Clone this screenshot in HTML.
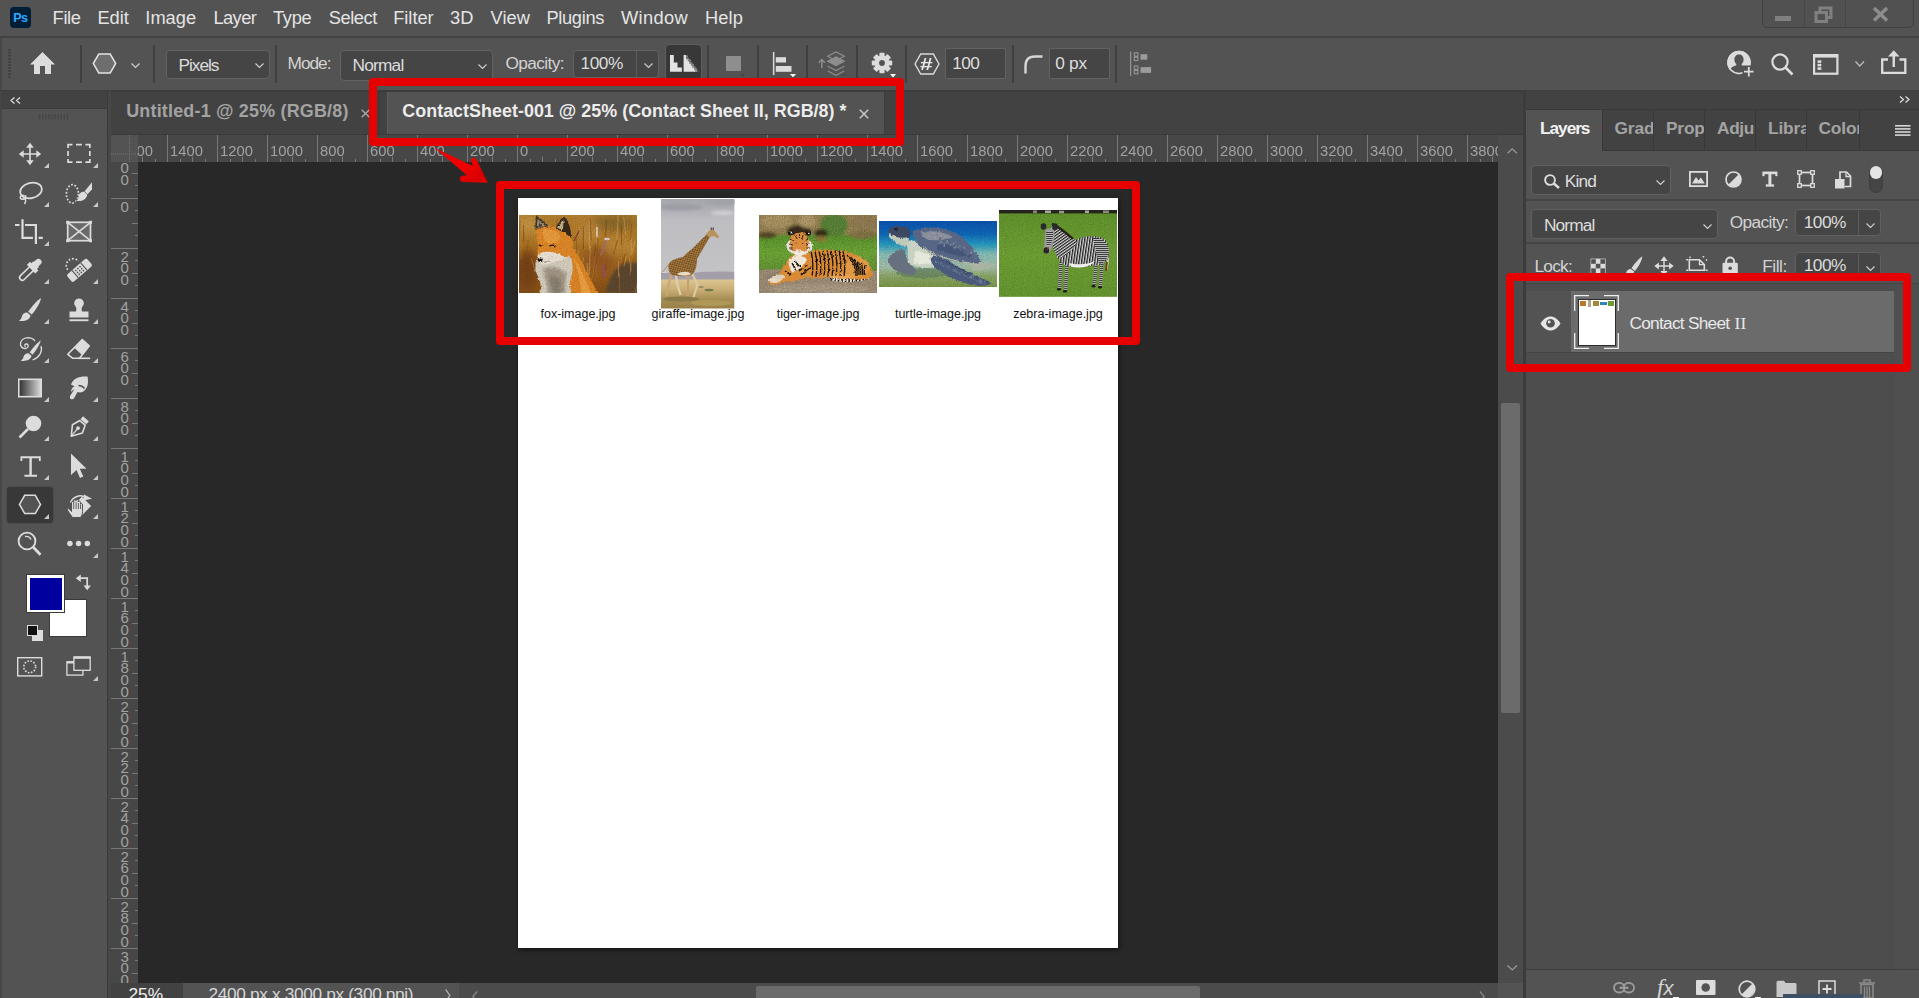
<!DOCTYPE html>
<html lang="en"><head><meta charset="utf-8"><title>ContactSheet-001 @ 25% (Contact Sheet II, RGB/8) *</title>
<style>
html,body{margin:0;padding:0;}
body{width:1919px;height:998px;overflow:hidden;background:#535353;position:relative;font-family:"Liberation Sans",sans-serif;}
.a{position:absolute;box-sizing:border-box;}
.t{position:absolute;white-space:pre;font-family:"Liberation Sans",sans-serif;}
svg{overflow:visible;}
</style></head>
<body>
<!-- p_base -->
<div class="a" style="left:0px;top:36px;width:1919px;height:2px;background:#434343;"></div>
<div class="a" style="left:0px;top:38px;width:1919px;height:52px;background:#535353;"></div>
<div class="a" style="left:0px;top:38px;width:2px;height:52px;background:#484848;"></div>
<div class="a" style="left:0px;top:89.5px;width:1919px;height:2px;background:#3e3e3e;"></div>
<div class="a" style="left:0px;top:91px;width:1919px;height:907px;background:#474747;"></div>
<div class="a" style="left:1px;top:91px;width:106.5px;height:18px;background:#424242;"></div>
<div class="a" style="left:1px;top:108px;width:106.5px;height:1px;background:#3c3c3c;"></div>
<div class="a" style="left:2px;top:109px;width:104.5px;height:889px;background:#535353;"></div>
<div class="a" style="left:107px;top:91px;width:1px;height:907px;background:#3a3a3a;"></div>
<div class="a" style="left:111px;top:91px;width:1412px;height:44px;background:#424242;"></div>
<div class="a" style="left:111px;top:91px;width:1412px;height:1px;background:#3a3a3a;"></div>
<div class="a" style="left:111px;top:134px;width:1387px;height:28px;background:#474747;"></div>
<div class="a" style="left:111px;top:162px;width:27px;height:821px;background:#474747;"></div>
<div class="a" style="left:138px;top:162px;width:1360px;height:821px;background:#282828;"></div>
<div class="a" style="left:1498px;top:134px;width:25px;height:849px;background:#4b4b4b;"></div>
<div class="a" style="left:111px;top:983px;width:1412px;height:15px;background:#4b4b4b;"></div>
<div class="a" style="left:1523px;top:91px;width:3px;height:907px;background:#3c3c3c;"></div>
<div class="a" style="left:1526px;top:91px;width:393px;height:18px;background:#424242;"></div>
<div class="a" style="left:1526px;top:109px;width:393px;height:41px;background:#424242;"></div>
<div class="a" style="left:1526px;top:150px;width:393px;height:848px;background:#535353;"></div>
<!-- p_menu -->
<div class="a" style="left:9.700px;top:7.300px;width:21px;height:20.500px;background:#001e36;border-radius:4px;"></div>
<div class="t" style="left:13.20px;top:12.00px;font-size:12.50px;line-height:12.50px;color:#31a8ff;letter-spacing:-0.645px;font-weight:bold;">Ps</div>
<div class="t" style="left:52.60px;top:9.00px;font-size:18.30px;line-height:18.30px;color:#e4e4e4;letter-spacing:-0.372px;">File</div>
<div class="t" style="left:97.40px;top:9.00px;font-size:18.30px;line-height:18.30px;color:#e4e4e4;letter-spacing:-0.058px;">Edit</div>
<div class="t" style="left:145.30px;top:9.00px;font-size:18.30px;line-height:18.30px;color:#e4e4e4;letter-spacing:0.008px;">Image</div>
<div class="t" style="left:213.50px;top:9.00px;font-size:18.30px;line-height:18.30px;color:#e4e4e4;letter-spacing:-0.615px;">Layer</div>
<div class="t" style="left:273.00px;top:9.00px;font-size:18.30px;line-height:18.30px;color:#e4e4e4;letter-spacing:-0.319px;">Type</div>
<div class="t" style="left:328.70px;top:9.00px;font-size:18.30px;line-height:18.30px;color:#e4e4e4;letter-spacing:-0.427px;">Select</div>
<div class="t" style="left:393.20px;top:9.00px;font-size:18.30px;line-height:18.30px;color:#e4e4e4;letter-spacing:-0.028px;">Filter</div>
<div class="t" style="left:450.10px;top:9.00px;font-size:18.30px;line-height:18.30px;color:#e4e4e4;letter-spacing:0.003px;">3D</div>
<div class="t" style="left:490.50px;top:9.00px;font-size:18.30px;line-height:18.30px;color:#e4e4e4;letter-spacing:0.091px;">View</div>
<div class="t" style="left:546.40px;top:9.00px;font-size:18.30px;line-height:18.30px;color:#e4e4e4;letter-spacing:-0.332px;">Plugins</div>
<div class="t" style="left:621.00px;top:9.00px;font-size:18.30px;line-height:18.30px;color:#e4e4e4;letter-spacing:0.319px;">Window</div>
<div class="t" style="left:705.10px;top:9.00px;font-size:18.30px;line-height:18.30px;color:#e4e4e4;letter-spacing:0.066px;">Help</div>
<div class="a" style="left:1762px;top:-2px;width:152px;height:30px;border:1px solid #404040;border-radius:0 0 5px 5px;background:#515151;"></div>
<div class="a" style="left:1804px;top:0px;width:1px;height:27px;background:#474747;"></div>
<div class="a" style="left:1845px;top:0px;width:1px;height:27px;background:#474747;"></div>
<div class="a" style="left:1775px;top:16px;width:15.5px;height:5px;background:#808080;"></div>
<svg class="a" style="left:1814px;top:6px;" width="20" height="18" viewBox="0 0 20 18"><path d="M6 5V2H17V11.500H13.500" fill="none" stroke="#808080" stroke-width="3"/><rect x="2" y="6.500" width="10.500" height="9" fill="none" stroke="#808080" stroke-width="3"/></svg>
<svg class="a" style="left:1872px;top:7px;" width="18" height="15" viewBox="0 0 18 15"><path d="M2 1L15 13.500M15 1L2 13.500" stroke="#8c8c8c" stroke-width="3.400" fill="none"/></svg>
<!-- p_options -->
<svg class="a" style="left:8px;top:49px;" width="4" height="30" viewBox="0 0 4 30"><rect x="0" y="0" width="3" height="1.6" fill="#404040"/><rect x="0" y="3.05" width="3" height="1.6" fill="#404040"/><rect x="0" y="6.1" width="3" height="1.6" fill="#404040"/><rect x="0" y="9.15" width="3" height="1.6" fill="#404040"/><rect x="0" y="12.2" width="3" height="1.6" fill="#404040"/><rect x="0" y="15.25" width="3" height="1.6" fill="#404040"/><rect x="0" y="18.3" width="3" height="1.6" fill="#404040"/><rect x="0" y="21.35" width="3" height="1.6" fill="#404040"/><rect x="0" y="24.4" width="3" height="1.6" fill="#404040"/><rect x="0" y="27.45" width="3" height="1.6" fill="#404040"/></svg>
<svg class="a" style="left:30px;top:52px;" width="25" height="22" viewBox="0 0 25 22"><path d="M12.5 0L25 12.6H21V22H15V14H10V22H4V12.6H0Z" fill="#dcdcdc"/></svg>
<div class="a" style="left:80px;top:45px;width:2px;height:38px;background:#3f3f3f;"></div>
<svg class="a" style="left:92px;top:53px;" width="25" height="21" viewBox="0 0 25 21"><path d="M1.3 10.5L6.8 1H18.2L23.7 10.5L18.2 20H6.8Z" fill="#6e6e6e" stroke="#e2e2e2" stroke-width="1.5"/></svg>
<svg class="a" style="left:131px;top:63px;" width="9" height="5.5" viewBox="0 0 9 5.5"><path d="M0.5 0.5L4.5 4.5L8.5 0.5" fill="none" stroke="#cfcfcf" stroke-width="1.15"/></svg>
<div class="a" style="left:153px;top:45px;width:2px;height:38px;background:#3f3f3f;"></div>
<div class="a" style="left:166px;top:50px;width:103.5px;height:28.5px;background:#454545;border:1px solid #626262;border-radius:4px;"></div>
<div class="t" style="left:178.50px;top:57.00px;font-size:17.30px;line-height:17.30px;color:#dcdcdc;letter-spacing:-1.025px;">Pixels</div>
<svg class="a" style="left:254.5px;top:63.3px;" width="9" height="5.5" viewBox="0 0 9 5.5"><path d="M0.5 0.5L4.5 4.5L8.5 0.5" fill="none" stroke="#cfcfcf" stroke-width="1.15"/></svg>
<div class="a" style="left:275px;top:45px;width:2px;height:38px;background:#3f3f3f;"></div>
<div class="t" style="left:287.50px;top:55.00px;font-size:17.30px;line-height:17.30px;color:#d2d2d2;letter-spacing:-1.016px;">Mode:</div>
<div class="a" style="left:340px;top:50px;width:153px;height:31px;background:#454545;border:1px solid #626262;border-radius:4px;"></div>
<div class="t" style="left:352.50px;top:57.00px;font-size:17.30px;line-height:17.30px;color:#dcdcdc;letter-spacing:-0.792px;">Normal</div>
<svg class="a" style="left:477.5px;top:63.8px;" width="9" height="5.5" viewBox="0 0 9 5.5"><path d="M0.5 0.5L4.5 4.5L8.5 0.5" fill="none" stroke="#cfcfcf" stroke-width="1.15"/></svg>
<div class="t" style="left:505.50px;top:55.00px;font-size:17.30px;line-height:17.30px;color:#d2d2d2;letter-spacing:-0.619px;">Opacity:</div>
<div class="a" style="left:573px;top:50px;width:85.5px;height:27.5px;background:#454545;border:1px solid #626262;border-radius:4px;"></div>
<div class="a" style="left:636px;top:51px;width:1px;height:25.5px;background:#5c5c5c;"></div>
<div class="t" style="left:580.50px;top:55.00px;font-size:17.30px;line-height:17.30px;color:#dcdcdc;letter-spacing:-0.437px;">100%</div>
<svg class="a" style="left:643.5px;top:63px;" width="9" height="5.5" viewBox="0 0 9 5.5"><path d="M0.5 0.5L4.5 4.5L8.5 0.5" fill="none" stroke="#cfcfcf" stroke-width="1.15"/></svg>
<div class="a" style="left:665.400px;top:44px;width:36.600px;height:39px;background:#383838;border-radius:4px;border:1px solid #5e5e5e;"></div>
<svg class="a" style="left:670px;top:55px;" width="27" height="17" viewBox="0 0 27 17"><path d="M0 0H3.800V7.400H7.500V12.600H11.900V16.800H0Z" fill="#e2e2e2"/><path d="M13.600 0H16.200V4.200H19.300V8.400H22.400V12.600H25.500V16.800H13.600Z" fill="#e2e2e2"/><rect x="16.2" y="0.5" width="1.600" height="1.600" fill="#8c8c8c"/><rect x="16.2" y="2.6" width="1.500" height="1.600" fill="#a8a8a8"/><rect x="17.8" y="2.6" width="1.500" height="1.600" fill="#6a6a6a"/><rect x="17.8" y="4.7" width="1.500" height="1.600" fill="#777"/><rect x="19.3" y="4.7" width="1.600" height="1.600" fill="#8c8c8c"/><rect x="19.3" y="6.8" width="1.500" height="1.600" fill="#a8a8a8"/><rect x="20.9" y="6.8" width="1.500" height="1.600" fill="#6a6a6a"/><rect x="20.9" y="8.9" width="1.500" height="1.600" fill="#777"/><rect x="22.4" y="8.9" width="1.600" height="1.600" fill="#8c8c8c"/><rect x="22.4" y="11" width="1.500" height="1.600" fill="#a8a8a8"/><rect x="24" y="11" width="1.500" height="1.600" fill="#6a6a6a"/><rect x="24" y="13.1" width="1.500" height="1.600" fill="#777"/><rect x="25.5" y="13.1" width="1.600" height="1.600" fill="#8c8c8c"/><rect x="25.5" y="15.2" width="1.500" height="1.600" fill="#a8a8a8"/><rect x="27.1" y="15.2" width="1.500" height="1.600" fill="#6a6a6a"/></svg>
<div class="a" style="left:707px;top:45px;width:2px;height:38px;background:#3f3f3f;"></div>
<div class="a" style="left:725.6px;top:55.5px;width:15px;height:15.2px;background:#8e8e8e;border-radius:1px;"></div>
<svg class="a" style="left:740.4px;top:74.3px;" width="6" height="4" viewBox="0 0 6 4"><path d="M0 0H5.400L2.700 3.200Z" fill="#474747"/></svg>
<div class="a" style="left:757px;top:45px;width:2px;height:38px;background:#3f3f3f;"></div>
<svg class="a" style="left:772px;top:52px;" width="26" height="26" viewBox="0 0 26 26"><rect x="0.900" y="0" width="1.500" height="23" fill="#dcdcdc"/><rect x="3.800" y="5.200" width="10.200" height="5.300" fill="#dcdcdc"/><rect x="3.800" y="14" width="15.700" height="5.800" fill="#dcdcdc"/><path d="M17.900 21.900H24.100L21 25.300Z" fill="#fff"/></svg>
<div class="a" style="left:806px;top:45px;width:2px;height:38px;background:#3f3f3f;"></div>
<svg class="a" style="left:817px;top:51px;" width="30" height="27" viewBox="0 0 30 27"><g fill="none" stroke="#8d8d8d" stroke-width="1.200"><path d="M19 0.900L27.300 5.200L19 9.500L10.700 5.200Z"/><path d="M10.700 15.200L19 19.500L27.300 15.200"/><path d="M10.700 20L19 24.300L27.300 20"/></g><path d="M19 5.900L27.300 10.200L19 14.500L10.700 10.200Z" fill="#8d8d8d" stroke="#8d8d8d" stroke-width="1.200"/><path d="M4.800 17V9M1.800 11.800L4.800 8.500L7.800 11.800" fill="none" stroke="#8d8d8d" stroke-width="1.500"/><path d="M24 23H29L26.500 26Z" fill="#4a4a4a"/></svg>
<div class="a" style="left:856px;top:45px;width:2px;height:38px;background:#3f3f3f;"></div>
<svg class="a" style="left:872px;top:53px;" width="20" height="20" viewBox="0 0 20 20"><g transform="translate(10 10)"><rect x="-2.6" y="-10.2" width="5.2" height="5" rx="0.8" transform="rotate(0)" fill="#dcdcdc"/><rect x="-2.6" y="-10.2" width="5.2" height="5" rx="0.8" transform="rotate(45)" fill="#dcdcdc"/><rect x="-2.6" y="-10.2" width="5.2" height="5" rx="0.8" transform="rotate(90)" fill="#dcdcdc"/><rect x="-2.6" y="-10.2" width="5.2" height="5" rx="0.8" transform="rotate(135)" fill="#dcdcdc"/><rect x="-2.6" y="-10.2" width="5.2" height="5" rx="0.8" transform="rotate(180)" fill="#dcdcdc"/><rect x="-2.6" y="-10.2" width="5.2" height="5" rx="0.8" transform="rotate(225)" fill="#dcdcdc"/><rect x="-2.6" y="-10.2" width="5.2" height="5" rx="0.8" transform="rotate(270)" fill="#dcdcdc"/><rect x="-2.6" y="-10.2" width="5.2" height="5" rx="0.8" transform="rotate(315)" fill="#dcdcdc"/><circle r="5.2" fill="none" stroke="#dcdcdc" stroke-width="4.600"/></g></svg>
<svg class="a" style="left:889.5px;top:73.5px;" width="6" height="4" viewBox="0 0 6 4"><path d="M0 0H6L3 3.4Z" fill="#fff"/></svg>
<div class="a" style="left:905px;top:45px;width:2px;height:38px;background:#3f3f3f;"></div>
<svg class="a" style="left:913.5px;top:53px;" width="26" height="22" viewBox="0 0 26 22"><path d="M1 11L6.7 1H19.3L25 11L19.3 21H6.7Z" fill="none" stroke="#dcdcdc" stroke-width="1.4"/></svg>
<div class="t" style="left:920.30px;top:56.00px;font-size:16.50px;line-height:16.50px;color:#e6e6e6;letter-spacing:0.000px;font-weight:bold;transform:scaleX(1.38);transform-origin:0 0;">#</div>
<div class="a" style="left:945px;top:48px;width:60.5px;height:30.5px;background:#454545;border:1px solid #626262;border-radius:1px;"></div>
<div class="t" style="left:952.20px;top:55.00px;font-size:17.30px;line-height:17.30px;color:#dcdcdc;letter-spacing:-0.622px;">100</div>
<div class="a" style="left:1012px;top:45px;width:2px;height:38px;background:#3f3f3f;"></div>
<svg class="a" style="left:1023px;top:54px;" width="20" height="20" viewBox="0 0 20 20"><path d="M2.5 19.5V12Q2.5 2.5 12 2.5H19.5" fill="none" stroke="#d6d6d6" stroke-width="2.4"/></svg>
<div class="a" style="left:1049px;top:48px;width:60.5px;height:30.5px;background:#454545;border:1px solid #626262;border-radius:1px;"></div>
<div class="t" style="left:1055.30px;top:55.00px;font-size:17.30px;line-height:17.30px;color:#dcdcdc;letter-spacing:-0.300px;">0 px</div>
<div class="a" style="left:1115px;top:45px;width:2px;height:38px;background:#3f3f3f;"></div>
<svg class="a" style="left:1129px;top:51px;" width="24" height="26" viewBox="0 0 24 26"><rect x="1.100" y="0.500" width="1.100" height="24.500" fill="#9c9c9c"/><g fill="none" stroke="#9c9c9c" stroke-width="1"><rect x="5.300" y="1.800" width="3.600" height="3.400"/><rect x="5.300" y="6.200" width="3.600" height="3.400"/><rect x="5.300" y="15" width="3.600" height="3.400"/><rect x="5.300" y="19.400" width="3.600" height="3.400"/><path d="M7.100 5.200V6.200M7.100 18.400V19.400"/></g><rect x="11.500" y="3.200" width="6.800" height="5.500" fill="#9c9c9c"/><rect x="11.500" y="16.100" width="10.600" height="5.800" fill="#9c9c9c"/></svg>
<svg class="a" style="left:1727px;top:50px;" width="28" height="27" viewBox="0 0 28 27"><circle cx="12" cy="12.500" r="11.700" fill="#dcdcdc"/><path d="M12 4.500c2.800 0 4.600 2.100 4.600 5 0 2-.9 3.600-1.900 4.500v1.300c2.500.8 5 1.900 6 3.700V24H3.300V19c1-1.800 3.500-2.900 6-3.700V14c-1-.9-1.900-2.500-1.900-4.500 0-2.900 1.800-5 4.600-5Z" fill="#535353"/><path d="M0 19.500C4 25.500 12 26 18 22L24 30H-2Z" fill="#535353"/><circle cx="12" cy="12.500" r="11" fill="none" stroke="#dcdcdc" stroke-width="1.600"/><rect x="15.500" y="15.500" width="13" height="12" fill="#535353"/><path d="M21.800 17V26.500M17 21.700H26.600" stroke="#dcdcdc" stroke-width="1.800" fill="none"/></svg>
<svg class="a" style="left:1771px;top:53px;" width="24" height="23" viewBox="0 0 24 23"><circle cx="9" cy="9" r="7.6" fill="none" stroke="#dcdcdc" stroke-width="2.2"/><path d="M14.5 14.5L21.5 21.5" stroke="#dcdcdc" stroke-width="2.6" fill="none"/></svg>
<svg class="a" style="left:1813px;top:54px;" width="26" height="21" viewBox="0 0 26 21"><rect x="1.1" y="1.1" width="23.3" height="18.6" fill="none" stroke="#dcdcdc" stroke-width="2.2"/><rect x="1" y="1" width="23.5" height="2.6" fill="#dcdcdc"/><rect x="4.5" y="6.3" width="3.8" height="2.6" fill="#dcdcdc"/><rect x="4.5" y="9.8" width="3.8" height="2.6" fill="#dcdcdc"/><rect x="4.5" y="13.3" width="3.8" height="2.6" fill="#dcdcdc"/></svg>
<svg class="a" style="left:1854.5px;top:61px;" width="9.5" height="6" viewBox="0 0 9.5 6"><path d="M0.5 0.5L4.75 5L9 0.5" fill="none" stroke="#bdbdbd" stroke-width="1.3"/></svg>
<svg class="a" style="left:1881px;top:49px;" width="26" height="25" viewBox="0 0 26 25"><path d="M7 10.5H1.2V23.8H24.3V10.5H18.5" fill="none" stroke="#dcdcdc" stroke-width="2.3"/><path d="M12.75 18V3" stroke="#dcdcdc" stroke-width="2.4" fill="none"/><path d="M7 7.5L12.75 1.2L18.5 7.5Z" fill="#dcdcdc"/></svg>
<!-- p_tools -->
<svg class="a" style="left:10px;top:97px;" width="12" height="8" viewBox="0 0 12 8"><path d="M4.5 0.5L1 3.5L4.5 6.5M10 0.5L6.5 3.5L10 6.5" fill="none" stroke="#e0e0e0" stroke-width="1.2"/></svg>
<svg class="a" style="left:39px;top:114px;" width="30" height="6" viewBox="0 0 30 6"><rect x="0" y="0" width="1.2" height="5.5" fill="#454545"/><rect x="3.1" y="0" width="1.2" height="5.5" fill="#454545"/><rect x="6.2" y="0" width="1.2" height="5.5" fill="#454545"/><rect x="9.3" y="0" width="1.2" height="5.5" fill="#454545"/><rect x="12.4" y="0" width="1.2" height="5.5" fill="#454545"/><rect x="15.5" y="0" width="1.2" height="5.5" fill="#454545"/><rect x="18.6" y="0" width="1.2" height="5.5" fill="#454545"/><rect x="21.7" y="0" width="1.2" height="5.5" fill="#454545"/><rect x="24.8" y="0" width="1.2" height="5.5" fill="#454545"/><rect x="27.9" y="0" width="1.2" height="5.5" fill="#454545"/></svg>
<svg class="a" style="left:16.5px;top:141px;" width="26" height="26" viewBox="0 0 26 26"><path d="M13 1.800L16.800 6.700H13.800V12.200H19.300V9.200L24.200 13L19.300 16.800V13.800H13.800V19.300H16.800L13 24.200L9.200 19.300H12.200V13.800H6.700V16.800L1.800 13L6.700 9.200V12.200H12.200V6.700H9.200Z" fill="#dcdcdc"/></svg>
<svg class="a" style="left:44px;top:163px;" width="6" height="6" viewBox="0 0 6 6"><path d="M5 0V5H0Z" fill="#c8c8c8"/></svg>
<svg class="a" style="left:66px;top:141px;" width="26" height="26" viewBox="0 0 26 26"><path d="M2.050 7V3.600H6.500M10 3.600H15.900M19.400 3.600H23.850V7M23.850 10V15M23.850 18V21.200H19.400M15.900 21.200H10M6.500 21.200H2.050V18M2.050 15V10" fill="none" stroke="#dcdcdc" stroke-width="1.700"/></svg>
<svg class="a" style="left:92.7px;top:163px;" width="6" height="6" viewBox="0 0 6 6"><path d="M5 0V5H0Z" fill="#c8c8c8"/></svg>
<svg class="a" style="left:16.5px;top:180px;" width="26" height="26" viewBox="0 0 26 26"><ellipse cx="14" cy="10.500" rx="11" ry="7.600" transform="rotate(-14 14 10.500)" fill="none" stroke="#dcdcdc" stroke-width="1.700"/><path d="M6.800 15.300c-2.800-.2-4.300 1.500-3.300 3 1.200 1.700 4.800 1 5.300-1.300.2-.9-.6-1.500-1.500-1.300M6.500 17.500c2.300 1.300 3 3.800 1 6.500" fill="none" stroke="#dcdcdc" stroke-width="1.500"/></svg>
<svg class="a" style="left:44px;top:202px;" width="6" height="6" viewBox="0 0 6 6"><path d="M5 0V5H0Z" fill="#c8c8c8"/></svg>
<svg class="a" style="left:66px;top:180px;" width="26" height="26" viewBox="0 0 26 26"><ellipse cx="6.400" cy="13.900" rx="6" ry="9.200" fill="none" stroke="#dcdcdc" stroke-width="1.700" stroke-dasharray="1.700 1.750"/><path d="M17 9.500C19 11 21 13 22.500 15.500L17 23H9Z" fill="#535353"/><path d="M26 2.300V9.200L21.600 14.200L18.600 11.300Z" fill="#dcdcdc"/><path d="M18.300 11.800C14.500 11.500 12.700 14 12.500 17 12.400 18.800 11.600 20 10.200 20.900 15 21.800 20.800 20 21.200 14.500Z" fill="#dcdcdc"/></svg>
<svg class="a" style="left:92.7px;top:202px;" width="6" height="6" viewBox="0 0 6 6"><path d="M5 0V5H0Z" fill="#c8c8c8"/></svg>
<svg class="a" style="left:15px;top:218px;" width="29" height="27" viewBox="0 0 29 27"><path d="M0 7H4.500M7.500 1.200V19.800H18M10 7H20.900V26M23.600 19.800H27.800" fill="none" stroke="#dcdcdc" stroke-width="2.200"/></svg>
<svg class="a" style="left:44px;top:240.5px;" width="6" height="6" viewBox="0 0 6 6"><path d="M5 0V5H0Z" fill="#c8c8c8"/></svg>
<svg class="a" style="left:66px;top:220px;" width="27" height="23" viewBox="0 0 27 23"><rect x="1.700" y="2.300" width="22.800" height="18.400" fill="#6a6a6a" stroke="#dcdcdc" stroke-width="1.700"/><path d="M1.700 2.300L24.500 20.700M24.500 2.300L1.700 20.700" fill="none" stroke="#dcdcdc" stroke-width="1.600"/><g fill="#dcdcdc"><rect x="0.200" y="0.800" width="3" height="3"/><rect x="23" y="0.800" width="3" height="3"/><rect x="0.200" y="19.200" width="3" height="3"/><rect x="23" y="19.200" width="3" height="3"/></g></svg>
<svg class="a" style="left:16.5px;top:257px;" width="26" height="26" viewBox="0 0 26 26"><g transform="translate(3.400 22.400) rotate(-44)"><path d="M16.500 -2.700H2.700A2.700 2.700 0 0 0 2.700 2.700H16.500" fill="none" stroke="#dcdcdc" stroke-width="1.600"/><rect x="14.800" y="-6" width="4.400" height="12" fill="#dcdcdc"/><rect x="17" y="-4" width="5" height="8" fill="#dcdcdc"/><path d="M20 -3.200H25A3.200 3.200 0 0 1 25 3.200H20Z" fill="#dcdcdc"/></g></svg>
<svg class="a" style="left:44px;top:279px;" width="6" height="6" viewBox="0 0 6 6"><path d="M5 0V5H0Z" fill="#c8c8c8"/></svg>
<svg class="a" style="left:66px;top:257px;" width="26" height="26" viewBox="0 0 26 26"><path d="M1.800 12.800A6.600 6.600 0 0 1 12.500 4.300" fill="none" stroke="#dcdcdc" stroke-width="1.700" stroke-dasharray="1.700 1.750"/><g transform="translate(13.500 13.300) rotate(-41)"><rect x="-13.200" y="-4.900" width="26.400" height="9.800" rx="2" fill="#dcdcdc"/><rect x="-6.300" y="-4.800" width="1.100" height="9.600" fill="#535353"/><rect x="5.200" y="-4.800" width="1.100" height="9.600" fill="#535353"/><g fill="#535353"><circle cx="-2.800" cy="-2.400" r="0.850"/><circle cx="0" cy="-2.400" r="0.850"/><circle cx="2.800" cy="-2.400" r="0.850"/><circle cx="-2.800" cy="0.300" r="0.850"/><circle cx="0" cy="0.300" r="0.850"/><circle cx="2.800" cy="0.300" r="0.850"/><circle cx="-2.800" cy="2.800" r="0.850"/><circle cx="0" cy="2.800" r="0.850"/><circle cx="2.800" cy="2.800" r="0.850"/></g></g></svg>
<svg class="a" style="left:92.7px;top:279px;" width="6" height="6" viewBox="0 0 6 6"><path d="M5 0V5H0Z" fill="#c8c8c8"/></svg>
<svg class="a" style="left:16.5px;top:296.5px;" width="26" height="26" viewBox="0 0 26 26"><g transform="translate(-0.600 -0.600)"><path d="M24.600 1.500C20.500 4 14.500 11 11.800 15.300L15.300 18.200C19 14 24.200 6 24.600 1.500Z" fill="#dcdcdc"/><path d="M10.800 16.200C7.500 16.200 5.800 18.200 5.300 20.500 4.900 22.300 3.900 23.500 2.500 24.300 7.500 25.300 13.300 23.800 14.200 19Z" fill="#dcdcdc"/></g></svg>
<svg class="a" style="left:44px;top:318.5px;" width="6" height="6" viewBox="0 0 6 6"><path d="M5 0V5H0Z" fill="#c8c8c8"/></svg>
<svg class="a" style="left:66px;top:296.5px;" width="26" height="26" viewBox="0 0 26 26"><path d="M13 1.500A4.700 4.700 0 0 1 16.200 9.700C15.500 11 15.500 13 16 14.500H22.500V20.500H3.500V14.500H10C10.500 13 10.500 11 9.800 9.700A4.700 4.700 0 0 1 13 1.500Z" fill="#dcdcdc"/><rect x="3.500" y="22.300" width="19" height="1.900" fill="#dcdcdc"/></svg>
<svg class="a" style="left:92.7px;top:318.5px;" width="6" height="6" viewBox="0 0 6 6"><path d="M5 0V5H0Z" fill="#c8c8c8"/></svg>
<svg class="a" style="left:16.5px;top:335.5px;" width="26" height="26" viewBox="0 0 26 26"><g transform="translate(1.500 2.300) scale(0.92)"><path d="M24.600 1.500C20.500 4 14.500 11 11.800 15.300L15.300 18.200C19 14 24.200 6 24.600 1.500Z" fill="#dcdcdc" stroke="#535353" stroke-width="0.800"/><path d="M10.800 16.200C7.500 16.200 5.800 18.200 5.300 20.500 4.900 22.300 3.900 23.500 2.500 24.300 7.500 25.300 13.300 23.800 14.200 19Z" fill="#dcdcdc"/></g><path d="M8.500 10.800C7.300 10 7.600 8.200 9.200 8 11 7.800 11.800 9.800 10.600 11.400 8.800 13.500 4.500 12.500 3.500 9 2.600 5 6.300 1.800 10.800 1.700 14 1.700 16.500 3 18 5" fill="none" stroke="#dcdcdc" stroke-width="1.300"/><path d="M24 10C25.800 15.500 22.500 21.500 15.500 24" fill="none" stroke="#dcdcdc" stroke-width="1.300"/></svg>
<svg class="a" style="left:44px;top:357.5px;" width="6" height="6" viewBox="0 0 6 6"><path d="M5 0V5H0Z" fill="#c8c8c8"/></svg>
<svg class="a" style="left:66px;top:335.5px;" width="26" height="26" viewBox="0 0 26 26"><path d="M16.300 3.600L23.200 9.900L13.500 22.300H6.800L1.800 18.300Z" fill="none" stroke="#dcdcdc" stroke-width="1.600" stroke-linejoin="round"/><path d="M16.300 3.600L23.200 9.900L16 19L8.500 12Z" fill="#dcdcdc"/><path d="M12.500 22.300H24.200" fill="none" stroke="#dcdcdc" stroke-width="1.600"/></svg>
<svg class="a" style="left:92.7px;top:357.5px;" width="6" height="6" viewBox="0 0 6 6"><path d="M5 0V5H0Z" fill="#c8c8c8"/></svg>
<svg class="a" style="left:16.5px;top:374.5px" width="26" height="26" viewBox="0 0 26 26"><defs><linearGradient id="gtool" x1="0" x2="1" y1="0" y2="0"><stop offset="0" stop-color="#2e2e2e"/><stop offset="1" stop-color="#dcdcdc"/></linearGradient></defs><rect x="1.800" y="4.300" width="22.400" height="17.400" fill="url(#gtool)" stroke="#dcdcdc" stroke-width="1.600"/></svg>
<svg class="a" style="left:44px;top:396.5px;" width="6" height="6" viewBox="0 0 6 6"><path d="M5 0V5H0Z" fill="#c8c8c8"/></svg>
<svg class="a" style="left:66px;top:374.5px;" width="26" height="26" viewBox="0 0 26 26"><path d="M5 9.500C7 3.500 13 1 21.500 1.500 22.500 6.500 22.500 12 18 16 15.500 18 13 17.500 11.500 17L8.500 22.500C7.500 24.300 5.800 24.800 4.700 24 3.600 23.200 3.600 21.700 4.500 20.300L8.200 14.500C7 14.800 5.800 15.800 5 17 5 15 6 12.500 8.500 11.300 7 10.500 6 10 5 9.500Z" fill="#dcdcdc"/><path d="M12.500 10.500C15 10.500 17 11.500 18.500 13.500" fill="none" stroke="#535353" stroke-width="1.300"/></svg>
<svg class="a" style="left:92.7px;top:396.5px;" width="6" height="6" viewBox="0 0 6 6"><path d="M5 0V5H0Z" fill="#c8c8c8"/></svg>
<svg class="a" style="left:16.5px;top:414px;" width="26" height="26" viewBox="0 0 26 26"><circle cx="16.500" cy="9.500" r="7.800" fill="#dcdcdc"/><path d="M11 15L2.500 23.500" fill="none" stroke="#dcdcdc" stroke-width="2.600"/></svg>
<svg class="a" style="left:44px;top:436px;" width="6" height="6" viewBox="0 0 6 6"><path d="M5 0V5H0Z" fill="#c8c8c8"/></svg>
<svg class="a" style="left:66px;top:414px;" width="26" height="26" viewBox="0 0 26 26"><g transform="rotate(40 13 13)"><path d="M9.200 2.200H16.800V6.200H9.200Z" fill="#dcdcdc"/><path d="M9.500 7.500H16.500L19.500 15.500 13 25 6.500 15.500Z" fill="none" stroke="#dcdcdc" stroke-width="1.600" stroke-linejoin="round"/><path d="M13 24V15.500" fill="none" stroke="#dcdcdc" stroke-width="1.300"/><circle cx="13" cy="14.500" r="1.900" fill="#dcdcdc"/></g></svg>
<svg class="a" style="left:92.7px;top:436px;" width="6" height="6" viewBox="0 0 6 6"><path d="M5 0V5H0Z" fill="#c8c8c8"/></svg>
<svg class="a" style="left:16.5px;top:453px;" width="26" height="26" viewBox="0 0 26 26"><path d="M3.500 3.200H23.700V8H21.900V5.300H14.800V21.800H20V23.700H7.400V21.800H12.400V5.300H5.300V8H3.500Z" fill="#dcdcdc"/></svg>
<svg class="a" style="left:44px;top:475px;" width="6" height="6" viewBox="0 0 6 6"><path d="M5 0V5H0Z" fill="#c8c8c8"/></svg>
<svg class="a" style="left:66px;top:453px;" width="26" height="26" viewBox="0 0 26 26"><path d="M5 0.500V22L10.500 17L14 25L17.300 23.500L13.800 15.800H20.500Z" fill="#dcdcdc"/></svg>
<svg class="a" style="left:92.7px;top:475px;" width="6" height="6" viewBox="0 0 6 6"><path d="M5 0V5H0Z" fill="#c8c8c8"/></svg>
<div class="a" style="left:6.300px;top:486px;width:47.500px;height:37.500px;background:#383838;border-radius:4px;border:1px solid #4c4c4c;"></div>
<svg class="a" style="left:16.5px;top:492px;" width="26" height="26" viewBox="0 0 26 26"><path d="M2.500 12.400L7.700 3.300H18.300L23.500 12.400L18.300 21.500H7.700Z" fill="#535353" stroke="#dcdcdc" stroke-width="1.500"/></svg>
<svg class="a" style="left:44px;top:514px;" width="6" height="6" viewBox="0 0 6 6"><path d="M5 0V5H0Z" fill="#c8c8c8"/></svg>
<svg class="a" style="left:66px;top:492px;" width="26" height="26" viewBox="0 0 26 26"><rect x="9.500" y="7.500" width="13" height="13" transform="rotate(45 16 14)" fill="#dcdcdc"/><path d="M4.500 10.500C7 4.500 14 2 20 5.500" fill="none" stroke="#dcdcdc" stroke-width="1.500"/><path d="M18 2.500L26 6.800 17.500 8.500Z" fill="#dcdcdc"/><path d="M6.500 25.500C4.500 22.500 2.500 20 1.500 18 1 16.800 2.500 16 3.500 17.200L5.500 19.500V10.500C5.500 9 7.500 9 7.700 10.500V8.800C7.800 7.300 9.800 7.300 10 8.800V8.500C10.100 7 12.100 7 12.300 8.500V10C12.500 8.700 14.500 8.800 14.500 10.300V12C15 11 16.800 11.300 16.500 13V19.500C16.500 22 16 23.500 14.500 25.500Z" fill="#dcdcdc" stroke="#535353" stroke-width="1"/><path d="M7.700 11V17M10.100 10V17M12.400 11V17M14.500 12.500V17" stroke="#535353" stroke-width="0.900" fill="none"/></svg>
<svg class="a" style="left:92.7px;top:514px;" width="6" height="6" viewBox="0 0 6 6"><path d="M5 0V5H0Z" fill="#c8c8c8"/></svg>
<svg class="a" style="left:16.5px;top:531px;" width="26" height="26" viewBox="0 0 26 26"><circle cx="10" cy="10" r="8.400" fill="none" stroke="#dcdcdc" stroke-width="1.900"/><path d="M8 5.500A5 5 0 0 1 14 8.500" fill="none" stroke="#dcdcdc" stroke-width="1.300"/><path d="M16.300 16.300L23.500 23.800" fill="none" stroke="#dcdcdc" stroke-width="2.800"/></svg>
<svg class="a" style="left:66px;top:531px;" width="26" height="26" viewBox="0 0 26 26"><circle cx="3.900" cy="12.600" r="2.750" fill="#dcdcdc"/><circle cx="12.600" cy="12.600" r="2.750" fill="#dcdcdc"/><circle cx="21.300" cy="12.600" r="2.750" fill="#dcdcdc"/></svg>
<svg class="a" style="left:92.7px;top:553px;" width="6" height="6" viewBox="0 0 6 6"><path d="M5 0V5H0Z" fill="#c8c8c8"/></svg>
<div class="a" style="left:49px;top:599px;width:38px;height:38.200px;background:#ffffff;border:1px solid #3a3a3a;"></div>
<div class="a" style="left:26.300px;top:574.300px;width:38.700px;height:38.700px;background:#ffffff;border:1.500px solid #3a3a3a;"></div>
<div class="a" style="left:30px;top:578px;width:32.2px;height:32.2px;background:#00009e;"></div>
<svg class="a" style="left:75px;top:573.5px;" width="18" height="18" viewBox="0 0 18 18"><path d="M5 4.200H12.200V12.500" fill="none" stroke="#dcdcdc" stroke-width="1.700"/><path d="M0.800 4.200L5.800 0.500V7.900Z" fill="#dcdcdc"/><path d="M12.200 16.300L8.500 11.500H15.900Z" fill="#dcdcdc"/></svg>
<div class="a" style="left:32px;top:630px;width:11px;height:11px;background:#dcdcdc;"></div>
<div class="a" style="left:27px;top:625.2px;width:11.2px;height:10.6px;background:#111;border:1.500px solid #dcdcdc;"></div>
<svg class="a" style="left:17px;top:656.5px;" width="27" height="21" viewBox="0 0 27 21"><rect x="0.700" y="0.700" width="24" height="18.200" fill="none" stroke="#dcdcdc" stroke-width="1.400"/><circle cx="12.700" cy="9.800" r="5.900" fill="none" stroke="#dcdcdc" stroke-width="1.600" stroke-dasharray="1.600 1.490"/></svg>
<svg class="a" style="left:66px;top:655.5px;" width="26" height="21" viewBox="0 0 26 21"><rect x="0.900" y="5.800" width="16" height="13.300" fill="#535353" stroke="#dcdcdc" stroke-width="1.300"/><rect x="0.900" y="5.500" width="16" height="2" fill="#dcdcdc"/><rect x="7.900" y="1" width="16.300" height="13.300" fill="#535353" stroke="#dcdcdc" stroke-width="1.300"/><rect x="7.900" y="0.500" width="16.300" height="2.300" fill="#dcdcdc"/></svg>
<svg class="a" style="left:93px;top:675.5px;" width="6" height="6" viewBox="0 0 6 6"><path d="M5 0V5H0Z" fill="#c8c8c8"/></svg>
<!-- p_doc -->
<div class="t" style="left:126.20px;top:103.00px;font-size:17.90px;line-height:17.90px;color:#a3a3a3;letter-spacing:0.214px;font-weight:bold;">Untitled-1 @ 25% (RGB/8)</div>
<svg class="a" style="left:360.5px;top:108.5px;" width="9" height="9" viewBox="0 0 9 9"><path d="M0.700 0.700L8.300 8.300M8.300 0.700L0.700 8.300" stroke="#a8a8a8" stroke-width="1.400" fill="none"/></svg>
<div class="a" style="left:378px;top:91px;width:1px;height:43px;background:#3a3a3a;"></div>
<div class="a" style="left:387px;top:92px;width:497.3px;height:42px;background:#535353;"></div>
<div class="a" style="left:387px;top:92px;width:1px;height:41.5px;background:#5d5d5d;"></div>
<div class="a" style="left:884.3px;top:92px;width:1px;height:42px;background:#3d3d3d;"></div>
<div class="t" style="left:402.30px;top:103.00px;font-size:17.90px;line-height:17.90px;color:#ececec;letter-spacing:0.026px;font-weight:bold;">ContactSheet-001 @ 25% (Contact Sheet II, RGB/8) *</div>
<svg class="a" style="left:859px;top:109px;" width="10" height="10" viewBox="0 0 10 10"><path d="M0.800 0.800L9.200 9.200M9.200 0.800L0.800 9.200" stroke="#c8c8c8" stroke-width="1.500" fill="none"/></svg>
<div class="a" style="left:111px;top:134px;width:1412px;height:1px;background:#3a3a3a;"></div>
<svg class="a" style="left:110px;top:134px;overflow:hidden" width="1388" height="28" viewBox="0 0 1388 28"><rect x="32" y="22.5" width="1" height="5.5" fill="#787878"/><rect x="45" y="25" width="1" height="3" fill="#787878"/><rect x="57" y="1" width="1" height="27" fill="#787878"/><rect x="70" y="25" width="1" height="3" fill="#787878"/><rect x="82" y="22.5" width="1" height="5.5" fill="#787878"/><rect x="95" y="25" width="1" height="3" fill="#787878"/><rect x="107" y="1" width="1" height="27" fill="#787878"/><rect x="120" y="25" width="1" height="3" fill="#787878"/><rect x="132" y="22.5" width="1" height="5.5" fill="#787878"/><rect x="145" y="25" width="1" height="3" fill="#787878"/><rect x="157" y="1" width="1" height="27" fill="#787878"/><rect x="170" y="25" width="1" height="3" fill="#787878"/><rect x="182" y="22.5" width="1" height="5.5" fill="#787878"/><rect x="195" y="25" width="1" height="3" fill="#787878"/><rect x="207" y="1" width="1" height="27" fill="#787878"/><rect x="220" y="25" width="1" height="3" fill="#787878"/><rect x="232" y="22.5" width="1" height="5.5" fill="#787878"/><rect x="245" y="25" width="1" height="3" fill="#787878"/><rect x="257" y="1" width="1" height="27" fill="#787878"/><rect x="270" y="25" width="1" height="3" fill="#787878"/><rect x="282" y="22.5" width="1" height="5.5" fill="#787878"/><rect x="295" y="25" width="1" height="3" fill="#787878"/><rect x="307" y="1" width="1" height="27" fill="#787878"/><rect x="320" y="25" width="1" height="3" fill="#787878"/><rect x="332" y="22.5" width="1" height="5.5" fill="#787878"/><rect x="345" y="25" width="1" height="3" fill="#787878"/><rect x="357" y="1" width="1" height="27" fill="#787878"/><rect x="370" y="25" width="1" height="3" fill="#787878"/><rect x="382" y="22.5" width="1" height="5.5" fill="#787878"/><rect x="395" y="25" width="1" height="3" fill="#787878"/><rect x="407" y="1" width="1" height="27" fill="#787878"/><rect x="420" y="25" width="1" height="3" fill="#787878"/><rect x="432" y="22.5" width="1" height="5.5" fill="#787878"/><rect x="445" y="25" width="1" height="3" fill="#787878"/><rect x="457" y="1" width="1" height="27" fill="#787878"/><rect x="470" y="25" width="1" height="3" fill="#787878"/><rect x="482" y="22.5" width="1" height="5.5" fill="#787878"/><rect x="495" y="25" width="1" height="3" fill="#787878"/><rect x="507" y="1" width="1" height="27" fill="#787878"/><rect x="520" y="25" width="1" height="3" fill="#787878"/><rect x="532" y="22.5" width="1" height="5.5" fill="#787878"/><rect x="545" y="25" width="1" height="3" fill="#787878"/><rect x="557" y="1" width="1" height="27" fill="#787878"/><rect x="570" y="25" width="1" height="3" fill="#787878"/><rect x="582" y="22.5" width="1" height="5.5" fill="#787878"/><rect x="595" y="25" width="1" height="3" fill="#787878"/><rect x="607" y="1" width="1" height="27" fill="#787878"/><rect x="620" y="25" width="1" height="3" fill="#787878"/><rect x="632" y="22.5" width="1" height="5.5" fill="#787878"/><rect x="645" y="25" width="1" height="3" fill="#787878"/><rect x="657" y="1" width="1" height="27" fill="#787878"/><rect x="670" y="25" width="1" height="3" fill="#787878"/><rect x="682" y="22.5" width="1" height="5.5" fill="#787878"/><rect x="695" y="25" width="1" height="3" fill="#787878"/><rect x="707" y="1" width="1" height="27" fill="#787878"/><rect x="720" y="25" width="1" height="3" fill="#787878"/><rect x="732" y="22.5" width="1" height="5.5" fill="#787878"/><rect x="745" y="25" width="1" height="3" fill="#787878"/><rect x="757" y="1" width="1" height="27" fill="#787878"/><rect x="770" y="25" width="1" height="3" fill="#787878"/><rect x="782" y="22.5" width="1" height="5.5" fill="#787878"/><rect x="795" y="25" width="1" height="3" fill="#787878"/><rect x="807" y="1" width="1" height="27" fill="#787878"/><rect x="820" y="25" width="1" height="3" fill="#787878"/><rect x="832" y="22.5" width="1" height="5.5" fill="#787878"/><rect x="845" y="25" width="1" height="3" fill="#787878"/><rect x="857" y="1" width="1" height="27" fill="#787878"/><rect x="870" y="25" width="1" height="3" fill="#787878"/><rect x="882" y="22.5" width="1" height="5.5" fill="#787878"/><rect x="895" y="25" width="1" height="3" fill="#787878"/><rect x="907" y="1" width="1" height="27" fill="#787878"/><rect x="920" y="25" width="1" height="3" fill="#787878"/><rect x="932" y="22.5" width="1" height="5.5" fill="#787878"/><rect x="945" y="25" width="1" height="3" fill="#787878"/><rect x="957" y="1" width="1" height="27" fill="#787878"/><rect x="970" y="25" width="1" height="3" fill="#787878"/><rect x="982" y="22.5" width="1" height="5.5" fill="#787878"/><rect x="995" y="25" width="1" height="3" fill="#787878"/><rect x="1007" y="1" width="1" height="27" fill="#787878"/><rect x="1020" y="25" width="1" height="3" fill="#787878"/><rect x="1032" y="22.5" width="1" height="5.5" fill="#787878"/><rect x="1045" y="25" width="1" height="3" fill="#787878"/><rect x="1057" y="1" width="1" height="27" fill="#787878"/><rect x="1070" y="25" width="1" height="3" fill="#787878"/><rect x="1082" y="22.5" width="1" height="5.5" fill="#787878"/><rect x="1095" y="25" width="1" height="3" fill="#787878"/><rect x="1107" y="1" width="1" height="27" fill="#787878"/><rect x="1120" y="25" width="1" height="3" fill="#787878"/><rect x="1132" y="22.5" width="1" height="5.5" fill="#787878"/><rect x="1145" y="25" width="1" height="3" fill="#787878"/><rect x="1157" y="1" width="1" height="27" fill="#787878"/><rect x="1170" y="25" width="1" height="3" fill="#787878"/><rect x="1182" y="22.5" width="1" height="5.5" fill="#787878"/><rect x="1195" y="25" width="1" height="3" fill="#787878"/><rect x="1207" y="1" width="1" height="27" fill="#787878"/><rect x="1220" y="25" width="1" height="3" fill="#787878"/><rect x="1232" y="22.5" width="1" height="5.5" fill="#787878"/><rect x="1245" y="25" width="1" height="3" fill="#787878"/><rect x="1257" y="1" width="1" height="27" fill="#787878"/><rect x="1270" y="25" width="1" height="3" fill="#787878"/><rect x="1282" y="22.5" width="1" height="5.5" fill="#787878"/><rect x="1295" y="25" width="1" height="3" fill="#787878"/><rect x="1307" y="1" width="1" height="27" fill="#787878"/><rect x="1320" y="25" width="1" height="3" fill="#787878"/><rect x="1332" y="22.5" width="1" height="5.5" fill="#787878"/><rect x="1345" y="25" width="1" height="3" fill="#787878"/><rect x="1357" y="1" width="1" height="27" fill="#787878"/><rect x="1370" y="25" width="1" height="3" fill="#787878"/><rect x="1382" y="22.5" width="1" height="5.5" fill="#787878"/></svg>
<div class="a" style="left:138px;top:134px;width:1360px;height:28px;overflow:hidden;"><div class="t" style="left:-17.70px;top:9.00px;font-size:15.30px;line-height:15.30px;color:#a2a2a2;letter-spacing:0.000px;transform:scaleX(0.965);transform-origin:0 0;">1600</div><div class="t" style="left:32.30px;top:9.00px;font-size:15.30px;line-height:15.30px;color:#a2a2a2;letter-spacing:0.000px;transform:scaleX(0.965);transform-origin:0 0;">1400</div><div class="t" style="left:82.30px;top:9.00px;font-size:15.30px;line-height:15.30px;color:#a2a2a2;letter-spacing:0.000px;transform:scaleX(0.965);transform-origin:0 0;">1200</div><div class="t" style="left:132.30px;top:9.00px;font-size:15.30px;line-height:15.30px;color:#a2a2a2;letter-spacing:0.000px;transform:scaleX(0.965);transform-origin:0 0;">1000</div><div class="t" style="left:182.30px;top:9.00px;font-size:15.30px;line-height:15.30px;color:#a2a2a2;letter-spacing:0.000px;transform:scaleX(0.965);transform-origin:0 0;">800</div><div class="t" style="left:232.30px;top:9.00px;font-size:15.30px;line-height:15.30px;color:#a2a2a2;letter-spacing:0.000px;transform:scaleX(0.965);transform-origin:0 0;">600</div><div class="t" style="left:282.30px;top:9.00px;font-size:15.30px;line-height:15.30px;color:#a2a2a2;letter-spacing:0.000px;transform:scaleX(0.965);transform-origin:0 0;">400</div><div class="t" style="left:332.30px;top:9.00px;font-size:15.30px;line-height:15.30px;color:#a2a2a2;letter-spacing:0.000px;transform:scaleX(0.965);transform-origin:0 0;">200</div><div class="t" style="left:382.30px;top:9.00px;font-size:15.30px;line-height:15.30px;color:#a2a2a2;letter-spacing:0.000px;transform:scaleX(0.965);transform-origin:0 0;">0</div><div class="t" style="left:432.30px;top:9.00px;font-size:15.30px;line-height:15.30px;color:#a2a2a2;letter-spacing:0.000px;transform:scaleX(0.965);transform-origin:0 0;">200</div><div class="t" style="left:482.30px;top:9.00px;font-size:15.30px;line-height:15.30px;color:#a2a2a2;letter-spacing:0.000px;transform:scaleX(0.965);transform-origin:0 0;">400</div><div class="t" style="left:532.30px;top:9.00px;font-size:15.30px;line-height:15.30px;color:#a2a2a2;letter-spacing:0.000px;transform:scaleX(0.965);transform-origin:0 0;">600</div><div class="t" style="left:582.30px;top:9.00px;font-size:15.30px;line-height:15.30px;color:#a2a2a2;letter-spacing:0.000px;transform:scaleX(0.965);transform-origin:0 0;">800</div><div class="t" style="left:632.30px;top:9.00px;font-size:15.30px;line-height:15.30px;color:#a2a2a2;letter-spacing:0.000px;transform:scaleX(0.965);transform-origin:0 0;">1000</div><div class="t" style="left:682.30px;top:9.00px;font-size:15.30px;line-height:15.30px;color:#a2a2a2;letter-spacing:0.000px;transform:scaleX(0.965);transform-origin:0 0;">1200</div><div class="t" style="left:732.30px;top:9.00px;font-size:15.30px;line-height:15.30px;color:#a2a2a2;letter-spacing:0.000px;transform:scaleX(0.965);transform-origin:0 0;">1400</div><div class="t" style="left:782.30px;top:9.00px;font-size:15.30px;line-height:15.30px;color:#a2a2a2;letter-spacing:0.000px;transform:scaleX(0.965);transform-origin:0 0;">1600</div><div class="t" style="left:832.30px;top:9.00px;font-size:15.30px;line-height:15.30px;color:#a2a2a2;letter-spacing:0.000px;transform:scaleX(0.965);transform-origin:0 0;">1800</div><div class="t" style="left:882.30px;top:9.00px;font-size:15.30px;line-height:15.30px;color:#a2a2a2;letter-spacing:0.000px;transform:scaleX(0.965);transform-origin:0 0;">2000</div><div class="t" style="left:932.30px;top:9.00px;font-size:15.30px;line-height:15.30px;color:#a2a2a2;letter-spacing:0.000px;transform:scaleX(0.965);transform-origin:0 0;">2200</div><div class="t" style="left:982.30px;top:9.00px;font-size:15.30px;line-height:15.30px;color:#a2a2a2;letter-spacing:0.000px;transform:scaleX(0.965);transform-origin:0 0;">2400</div><div class="t" style="left:1032.30px;top:9.00px;font-size:15.30px;line-height:15.30px;color:#a2a2a2;letter-spacing:0.000px;transform:scaleX(0.965);transform-origin:0 0;">2600</div><div class="t" style="left:1082.30px;top:9.00px;font-size:15.30px;line-height:15.30px;color:#a2a2a2;letter-spacing:0.000px;transform:scaleX(0.965);transform-origin:0 0;">2800</div><div class="t" style="left:1132.30px;top:9.00px;font-size:15.30px;line-height:15.30px;color:#a2a2a2;letter-spacing:0.000px;transform:scaleX(0.965);transform-origin:0 0;">3000</div><div class="t" style="left:1182.30px;top:9.00px;font-size:15.30px;line-height:15.30px;color:#a2a2a2;letter-spacing:0.000px;transform:scaleX(0.965);transform-origin:0 0;">3200</div><div class="t" style="left:1232.30px;top:9.00px;font-size:15.30px;line-height:15.30px;color:#a2a2a2;letter-spacing:0.000px;transform:scaleX(0.965);transform-origin:0 0;">3400</div><div class="t" style="left:1282.30px;top:9.00px;font-size:15.30px;line-height:15.30px;color:#a2a2a2;letter-spacing:0.000px;transform:scaleX(0.965);transform-origin:0 0;">3600</div><div class="t" style="left:1332.30px;top:9.00px;font-size:15.30px;line-height:15.30px;color:#a2a2a2;letter-spacing:0.000px;transform:scaleX(0.965);transform-origin:0 0;">3800</div></div>
<div class="a" style="left:111px;top:135px;width:27px;height:27px;background:#535353;"></div>
<svg class="a" style="left:110px;top:134px;" width="28" height="28" viewBox="0 0 28 28"><path d="M1 20H28" stroke="#757575" stroke-width="1" stroke-dasharray="1 1" fill="none"/><path d="M19.500 1V28" stroke="#757575" stroke-width="1" stroke-dasharray="1 1" fill="none"/></svg>
<svg class="a" style="left:110px;top:162px;overflow:hidden" width="28" height="821" viewBox="0 0 28 821"><rect x="22" y="11" width="6" height="1" fill="#787878"/><rect x="25" y="23" width="3" height="1" fill="#787878"/><rect x="1" y="36" width="27" height="1" fill="#787878"/><rect x="25" y="48" width="3" height="1" fill="#787878"/><rect x="22" y="61" width="6" height="1" fill="#787878"/><rect x="25" y="73" width="3" height="1" fill="#787878"/><rect x="1" y="86" width="27" height="1" fill="#787878"/><rect x="25" y="98" width="3" height="1" fill="#787878"/><rect x="22" y="111" width="6" height="1" fill="#787878"/><rect x="25" y="123" width="3" height="1" fill="#787878"/><rect x="1" y="136" width="27" height="1" fill="#787878"/><rect x="25" y="148" width="3" height="1" fill="#787878"/><rect x="22" y="161" width="6" height="1" fill="#787878"/><rect x="25" y="173" width="3" height="1" fill="#787878"/><rect x="1" y="186" width="27" height="1" fill="#787878"/><rect x="25" y="198" width="3" height="1" fill="#787878"/><rect x="22" y="211" width="6" height="1" fill="#787878"/><rect x="25" y="223" width="3" height="1" fill="#787878"/><rect x="1" y="236" width="27" height="1" fill="#787878"/><rect x="25" y="248" width="3" height="1" fill="#787878"/><rect x="22" y="261" width="6" height="1" fill="#787878"/><rect x="25" y="273" width="3" height="1" fill="#787878"/><rect x="1" y="286" width="27" height="1" fill="#787878"/><rect x="25" y="298" width="3" height="1" fill="#787878"/><rect x="22" y="311" width="6" height="1" fill="#787878"/><rect x="25" y="323" width="3" height="1" fill="#787878"/><rect x="1" y="336" width="27" height="1" fill="#787878"/><rect x="25" y="348" width="3" height="1" fill="#787878"/><rect x="22" y="361" width="6" height="1" fill="#787878"/><rect x="25" y="373" width="3" height="1" fill="#787878"/><rect x="1" y="386" width="27" height="1" fill="#787878"/><rect x="25" y="398" width="3" height="1" fill="#787878"/><rect x="22" y="411" width="6" height="1" fill="#787878"/><rect x="25" y="423" width="3" height="1" fill="#787878"/><rect x="1" y="436" width="27" height="1" fill="#787878"/><rect x="25" y="448" width="3" height="1" fill="#787878"/><rect x="22" y="461" width="6" height="1" fill="#787878"/><rect x="25" y="473" width="3" height="1" fill="#787878"/><rect x="1" y="486" width="27" height="1" fill="#787878"/><rect x="25" y="498" width="3" height="1" fill="#787878"/><rect x="22" y="511" width="6" height="1" fill="#787878"/><rect x="25" y="523" width="3" height="1" fill="#787878"/><rect x="1" y="536" width="27" height="1" fill="#787878"/><rect x="25" y="548" width="3" height="1" fill="#787878"/><rect x="22" y="561" width="6" height="1" fill="#787878"/><rect x="25" y="573" width="3" height="1" fill="#787878"/><rect x="1" y="586" width="27" height="1" fill="#787878"/><rect x="25" y="598" width="3" height="1" fill="#787878"/><rect x="22" y="611" width="6" height="1" fill="#787878"/><rect x="25" y="623" width="3" height="1" fill="#787878"/><rect x="1" y="636" width="27" height="1" fill="#787878"/><rect x="25" y="648" width="3" height="1" fill="#787878"/><rect x="22" y="661" width="6" height="1" fill="#787878"/><rect x="25" y="673" width="3" height="1" fill="#787878"/><rect x="1" y="686" width="27" height="1" fill="#787878"/><rect x="25" y="698" width="3" height="1" fill="#787878"/><rect x="22" y="711" width="6" height="1" fill="#787878"/><rect x="25" y="723" width="3" height="1" fill="#787878"/><rect x="1" y="736" width="27" height="1" fill="#787878"/><rect x="25" y="748" width="3" height="1" fill="#787878"/><rect x="22" y="761" width="6" height="1" fill="#787878"/><rect x="25" y="773" width="3" height="1" fill="#787878"/><rect x="1" y="786" width="27" height="1" fill="#787878"/><rect x="25" y="798" width="3" height="1" fill="#787878"/><rect x="22" y="811" width="6" height="1" fill="#787878"/></svg>
<div class="a" style="left:110px;top:162px;width:28px;height:821px;overflow:hidden;"><div class="t" style="left:10.60px;top:-13.00px;font-size:15.00px;line-height:15.00px;color:#a2a2a2;letter-spacing:0.000px;transform:scaleX(1);transform-origin:0 0;">2</div><div class="t" style="left:10.60px;top:-2.00px;font-size:15.00px;line-height:15.00px;color:#a2a2a2;letter-spacing:0.000px;transform:scaleX(1);transform-origin:0 0;">0</div><div class="t" style="left:10.60px;top:10.00px;font-size:15.00px;line-height:15.00px;color:#a2a2a2;letter-spacing:0.000px;transform:scaleX(1);transform-origin:0 0;">0</div><div class="t" style="left:10.60px;top:37.00px;font-size:15.00px;line-height:15.00px;color:#a2a2a2;letter-spacing:0.000px;transform:scaleX(1);transform-origin:0 0;">0</div><div class="t" style="left:10.60px;top:87.00px;font-size:15.00px;line-height:15.00px;color:#a2a2a2;letter-spacing:0.000px;transform:scaleX(1);transform-origin:0 0;">2</div><div class="t" style="left:10.60px;top:98.00px;font-size:15.00px;line-height:15.00px;color:#a2a2a2;letter-spacing:0.000px;transform:scaleX(1);transform-origin:0 0;">0</div><div class="t" style="left:10.60px;top:110.00px;font-size:15.00px;line-height:15.00px;color:#a2a2a2;letter-spacing:0.000px;transform:scaleX(1);transform-origin:0 0;">0</div><div class="t" style="left:10.60px;top:137.00px;font-size:15.00px;line-height:15.00px;color:#a2a2a2;letter-spacing:0.000px;transform:scaleX(1);transform-origin:0 0;">4</div><div class="t" style="left:10.60px;top:148.00px;font-size:15.00px;line-height:15.00px;color:#a2a2a2;letter-spacing:0.000px;transform:scaleX(1);transform-origin:0 0;">0</div><div class="t" style="left:10.60px;top:160.00px;font-size:15.00px;line-height:15.00px;color:#a2a2a2;letter-spacing:0.000px;transform:scaleX(1);transform-origin:0 0;">0</div><div class="t" style="left:10.60px;top:187.00px;font-size:15.00px;line-height:15.00px;color:#a2a2a2;letter-spacing:0.000px;transform:scaleX(1);transform-origin:0 0;">6</div><div class="t" style="left:10.60px;top:198.00px;font-size:15.00px;line-height:15.00px;color:#a2a2a2;letter-spacing:0.000px;transform:scaleX(1);transform-origin:0 0;">0</div><div class="t" style="left:10.60px;top:210.00px;font-size:15.00px;line-height:15.00px;color:#a2a2a2;letter-spacing:0.000px;transform:scaleX(1);transform-origin:0 0;">0</div><div class="t" style="left:10.60px;top:237.00px;font-size:15.00px;line-height:15.00px;color:#a2a2a2;letter-spacing:0.000px;transform:scaleX(1);transform-origin:0 0;">8</div><div class="t" style="left:10.60px;top:248.00px;font-size:15.00px;line-height:15.00px;color:#a2a2a2;letter-spacing:0.000px;transform:scaleX(1);transform-origin:0 0;">0</div><div class="t" style="left:10.60px;top:260.00px;font-size:15.00px;line-height:15.00px;color:#a2a2a2;letter-spacing:0.000px;transform:scaleX(1);transform-origin:0 0;">0</div><div class="t" style="left:10.60px;top:287.00px;font-size:15.00px;line-height:15.00px;color:#a2a2a2;letter-spacing:0.000px;transform:scaleX(1);transform-origin:0 0;">1</div><div class="t" style="left:10.60px;top:298.00px;font-size:15.00px;line-height:15.00px;color:#a2a2a2;letter-spacing:0.000px;transform:scaleX(1);transform-origin:0 0;">0</div><div class="t" style="left:10.60px;top:310.00px;font-size:15.00px;line-height:15.00px;color:#a2a2a2;letter-spacing:0.000px;transform:scaleX(1);transform-origin:0 0;">0</div><div class="t" style="left:10.60px;top:322.00px;font-size:15.00px;line-height:15.00px;color:#a2a2a2;letter-spacing:0.000px;transform:scaleX(1);transform-origin:0 0;">0</div><div class="t" style="left:10.60px;top:337.00px;font-size:15.00px;line-height:15.00px;color:#a2a2a2;letter-spacing:0.000px;transform:scaleX(1);transform-origin:0 0;">1</div><div class="t" style="left:10.60px;top:348.00px;font-size:15.00px;line-height:15.00px;color:#a2a2a2;letter-spacing:0.000px;transform:scaleX(1);transform-origin:0 0;">2</div><div class="t" style="left:10.60px;top:360.00px;font-size:15.00px;line-height:15.00px;color:#a2a2a2;letter-spacing:0.000px;transform:scaleX(1);transform-origin:0 0;">0</div><div class="t" style="left:10.60px;top:372.00px;font-size:15.00px;line-height:15.00px;color:#a2a2a2;letter-spacing:0.000px;transform:scaleX(1);transform-origin:0 0;">0</div><div class="t" style="left:10.60px;top:387.00px;font-size:15.00px;line-height:15.00px;color:#a2a2a2;letter-spacing:0.000px;transform:scaleX(1);transform-origin:0 0;">1</div><div class="t" style="left:10.60px;top:398.00px;font-size:15.00px;line-height:15.00px;color:#a2a2a2;letter-spacing:0.000px;transform:scaleX(1);transform-origin:0 0;">4</div><div class="t" style="left:10.60px;top:410.00px;font-size:15.00px;line-height:15.00px;color:#a2a2a2;letter-spacing:0.000px;transform:scaleX(1);transform-origin:0 0;">0</div><div class="t" style="left:10.60px;top:422.00px;font-size:15.00px;line-height:15.00px;color:#a2a2a2;letter-spacing:0.000px;transform:scaleX(1);transform-origin:0 0;">0</div><div class="t" style="left:10.60px;top:437.00px;font-size:15.00px;line-height:15.00px;color:#a2a2a2;letter-spacing:0.000px;transform:scaleX(1);transform-origin:0 0;">1</div><div class="t" style="left:10.60px;top:448.00px;font-size:15.00px;line-height:15.00px;color:#a2a2a2;letter-spacing:0.000px;transform:scaleX(1);transform-origin:0 0;">6</div><div class="t" style="left:10.60px;top:460.00px;font-size:15.00px;line-height:15.00px;color:#a2a2a2;letter-spacing:0.000px;transform:scaleX(1);transform-origin:0 0;">0</div><div class="t" style="left:10.60px;top:472.00px;font-size:15.00px;line-height:15.00px;color:#a2a2a2;letter-spacing:0.000px;transform:scaleX(1);transform-origin:0 0;">0</div><div class="t" style="left:10.60px;top:487.00px;font-size:15.00px;line-height:15.00px;color:#a2a2a2;letter-spacing:0.000px;transform:scaleX(1);transform-origin:0 0;">1</div><div class="t" style="left:10.60px;top:498.00px;font-size:15.00px;line-height:15.00px;color:#a2a2a2;letter-spacing:0.000px;transform:scaleX(1);transform-origin:0 0;">8</div><div class="t" style="left:10.60px;top:510.00px;font-size:15.00px;line-height:15.00px;color:#a2a2a2;letter-spacing:0.000px;transform:scaleX(1);transform-origin:0 0;">0</div><div class="t" style="left:10.60px;top:522.00px;font-size:15.00px;line-height:15.00px;color:#a2a2a2;letter-spacing:0.000px;transform:scaleX(1);transform-origin:0 0;">0</div><div class="t" style="left:10.60px;top:537.00px;font-size:15.00px;line-height:15.00px;color:#a2a2a2;letter-spacing:0.000px;transform:scaleX(1);transform-origin:0 0;">2</div><div class="t" style="left:10.60px;top:548.00px;font-size:15.00px;line-height:15.00px;color:#a2a2a2;letter-spacing:0.000px;transform:scaleX(1);transform-origin:0 0;">0</div><div class="t" style="left:10.60px;top:560.00px;font-size:15.00px;line-height:15.00px;color:#a2a2a2;letter-spacing:0.000px;transform:scaleX(1);transform-origin:0 0;">0</div><div class="t" style="left:10.60px;top:572.00px;font-size:15.00px;line-height:15.00px;color:#a2a2a2;letter-spacing:0.000px;transform:scaleX(1);transform-origin:0 0;">0</div><div class="t" style="left:10.60px;top:587.00px;font-size:15.00px;line-height:15.00px;color:#a2a2a2;letter-spacing:0.000px;transform:scaleX(1);transform-origin:0 0;">2</div><div class="t" style="left:10.60px;top:598.00px;font-size:15.00px;line-height:15.00px;color:#a2a2a2;letter-spacing:0.000px;transform:scaleX(1);transform-origin:0 0;">2</div><div class="t" style="left:10.60px;top:610.00px;font-size:15.00px;line-height:15.00px;color:#a2a2a2;letter-spacing:0.000px;transform:scaleX(1);transform-origin:0 0;">0</div><div class="t" style="left:10.60px;top:622.00px;font-size:15.00px;line-height:15.00px;color:#a2a2a2;letter-spacing:0.000px;transform:scaleX(1);transform-origin:0 0;">0</div><div class="t" style="left:10.60px;top:637.00px;font-size:15.00px;line-height:15.00px;color:#a2a2a2;letter-spacing:0.000px;transform:scaleX(1);transform-origin:0 0;">2</div><div class="t" style="left:10.60px;top:648.00px;font-size:15.00px;line-height:15.00px;color:#a2a2a2;letter-spacing:0.000px;transform:scaleX(1);transform-origin:0 0;">4</div><div class="t" style="left:10.60px;top:660.00px;font-size:15.00px;line-height:15.00px;color:#a2a2a2;letter-spacing:0.000px;transform:scaleX(1);transform-origin:0 0;">0</div><div class="t" style="left:10.60px;top:672.00px;font-size:15.00px;line-height:15.00px;color:#a2a2a2;letter-spacing:0.000px;transform:scaleX(1);transform-origin:0 0;">0</div><div class="t" style="left:10.60px;top:687.00px;font-size:15.00px;line-height:15.00px;color:#a2a2a2;letter-spacing:0.000px;transform:scaleX(1);transform-origin:0 0;">2</div><div class="t" style="left:10.60px;top:698.00px;font-size:15.00px;line-height:15.00px;color:#a2a2a2;letter-spacing:0.000px;transform:scaleX(1);transform-origin:0 0;">6</div><div class="t" style="left:10.60px;top:710.00px;font-size:15.00px;line-height:15.00px;color:#a2a2a2;letter-spacing:0.000px;transform:scaleX(1);transform-origin:0 0;">0</div><div class="t" style="left:10.60px;top:722.00px;font-size:15.00px;line-height:15.00px;color:#a2a2a2;letter-spacing:0.000px;transform:scaleX(1);transform-origin:0 0;">0</div><div class="t" style="left:10.60px;top:737.00px;font-size:15.00px;line-height:15.00px;color:#a2a2a2;letter-spacing:0.000px;transform:scaleX(1);transform-origin:0 0;">2</div><div class="t" style="left:10.60px;top:748.00px;font-size:15.00px;line-height:15.00px;color:#a2a2a2;letter-spacing:0.000px;transform:scaleX(1);transform-origin:0 0;">8</div><div class="t" style="left:10.60px;top:760.00px;font-size:15.00px;line-height:15.00px;color:#a2a2a2;letter-spacing:0.000px;transform:scaleX(1);transform-origin:0 0;">0</div><div class="t" style="left:10.60px;top:772.00px;font-size:15.00px;line-height:15.00px;color:#a2a2a2;letter-spacing:0.000px;transform:scaleX(1);transform-origin:0 0;">0</div><div class="t" style="left:10.60px;top:787.00px;font-size:15.00px;line-height:15.00px;color:#a2a2a2;letter-spacing:0.000px;transform:scaleX(1);transform-origin:0 0;">3</div><div class="t" style="left:10.60px;top:798.00px;font-size:15.00px;line-height:15.00px;color:#a2a2a2;letter-spacing:0.000px;transform:scaleX(1);transform-origin:0 0;">0</div><div class="t" style="left:10.60px;top:810.00px;font-size:15.00px;line-height:15.00px;color:#a2a2a2;letter-spacing:0.000px;transform:scaleX(1);transform-origin:0 0;">0</div><div class="t" style="left:10.60px;top:822.00px;font-size:15.00px;line-height:15.00px;color:#a2a2a2;letter-spacing:0.000px;transform:scaleX(1);transform-origin:0 0;">0</div></div>
<div class="a" style="left:518px;top:198px;width:600px;height:750px;background:#fff;box-shadow:1px 2px 5px rgba(0,0,0,.55);"></div>
<svg class="a" style="left:519px;top:215px;overflow:hidden" width="118" height="78" viewBox="0 0 118 78" preserveAspectRatio="none"><defs><filter id="fxb1" x="-20%" y="-20%" width="140%" height="140%"><feGaussianBlur stdDeviation="0.6"/></filter><filter id="fxb2" x="-20%" y="-20%" width="140%" height="140%"><feGaussianBlur stdDeviation="1.6"/></filter><filter id="fxb3" x="-30%" y="-30%" width="160%" height="160%"><feGaussianBlur stdDeviation="4"/></filter><filter id="fxr" x="-10%" y="-10%" width="120%" height="120%"><feTurbulence type="fractalNoise" baseFrequency="0.35" numOctaves="2" seed="7" result="t"/><feDisplacementMap in="SourceGraphic" in2="t" scale="3.2" xChannelSelector="R" yChannelSelector="G"/><feGaussianBlur stdDeviation="0.45"/></filter><filter id="fxn" x="0" y="0" width="100%" height="100%"><feTurbulence type="fractalNoise" baseFrequency="0.9" numOctaves="2" seed="3"/><feColorMatrix type="matrix" values="0 0 0 0 0  0 0 0 0 0  0 0 0 0 0  0.9 0.9 0.9 0 -0.95"/></filter></defs><defs><linearGradient id="fxbg" x1="0" y1="0" x2="0" y2="1"><stop offset="0" stop-color="#b98432"/><stop offset="0.35" stop-color="#b57a26"/><stop offset="0.7" stop-color="#a2641d"/><stop offset="1" stop-color="#8a5218"/></linearGradient></defs><rect width="118" height="78" fill="url(#fxbg)"/><g filter="url(#fxb3)"><ellipse cx="95" cy="8" rx="22" ry="8" fill="#8f6a2a"/><ellipse cx="10" cy="10" rx="14" ry="8" fill="#c99745"/><ellipse cx="8" cy="55" rx="12" ry="20" fill="#7c4518"/><ellipse cx="80" cy="45" rx="16" ry="14" fill="#9a5c20"/><ellipse cx="100" cy="30" rx="16" ry="10" fill="#c08a38"/><ellipse cx="70" cy="18" rx="12" ry="10" fill="#c38c3a"/></g><path d="M86 78C90 62 98 48 110 47 114 47 118 48 119 49V78Z" fill="#5e4a30" filter="url(#fxb2)"/><g stroke-width="0.7" fill="none" filter="url(#fxb1)" opacity="0.75"><path d="M73.5 63.0L77.0 37.1" stroke="#b87a2c"/><path d="M76.9 50.7L79.1 23.9" stroke="#8a5218"/><path d="M76.6 72.3L76.3 60.0" stroke="#8a5218"/><path d="M44.9 25.9L46.8 10.9" stroke="#e0b868"/><path d="M33.0 73.1L30.3 47.8" stroke="#d2a04a"/><path d="M16.4 55.8L12.4 43.3" stroke="#d2a04a"/><path d="M24.7 32.5L27.7 2.8" stroke="#c08430"/><path d="M37.0 31.5L38.0 4.0" stroke="#8a5218"/><path d="M111.0 60.1L114.2 30.7" stroke="#c08430"/><path d="M2.5 44.1L0.7 15.3" stroke="#c08430"/><path d="M35.6 55.0L37.0 44.9" stroke="#c08430"/><path d="M7.8 40.6L9.4 24.5" stroke="#8a5218"/><path d="M56.8 60.9L60.6 49.7" stroke="#d2a04a"/><path d="M112.0 40.7L112.4 22.7" stroke="#e0b868"/><path d="M43.2 53.6L39.6 43.4" stroke="#8a5218"/><path d="M73.6 75.4L71.6 63.0" stroke="#e0b868"/><path d="M40.6 40.6L42.8 20.1" stroke="#d2a04a"/><path d="M69.6 65.3L68.0 48.0" stroke="#e0b868"/><path d="M111.6 25.3L112.5 8.5" stroke="#8a5218"/><path d="M40.1 73.6L38.6 52.7" stroke="#c08430"/><path d="M36.1 66.3L37.9 43.8" stroke="#c08430"/><path d="M117.6 29.4L121.5 18.4" stroke="#6e3f14"/><path d="M109.0 21.8L107.7 -3.0" stroke="#c08430"/><path d="M53.8 44.5L57.1 33.3" stroke="#d2a04a"/><path d="M94.6 39.4L98.4 25.2" stroke="#6e3f14"/><path d="M112.1 56.6L108.9 30.8" stroke="#e0b868"/><path d="M44.0 23.4L41.1 5.0" stroke="#6e3f14"/><path d="M100.6 76.6L100.5 57.5" stroke="#b87a2c"/><path d="M37.5 35.9L40.7 16.5" stroke="#d2a04a"/><path d="M44.5 77.3L45.5 48.1" stroke="#e0b868"/><path d="M102.4 30.4L102.5 10.6" stroke="#6e3f14"/><path d="M102.4 41.0L104.6 15.2" stroke="#b87a2c"/><path d="M69.3 22.0L69.8 5.9" stroke="#b87a2c"/><path d="M33.1 48.2L34.7 22.8" stroke="#c08430"/><path d="M112.9 39.7L115.7 26.2" stroke="#e0b868"/><path d="M64.5 34.5L64.2 11.1" stroke="#6e3f14"/><path d="M76.4 66.3L77.6 49.3" stroke="#b87a2c"/><path d="M110.6 43.7L108.0 15.2" stroke="#b87a2c"/><path d="M53.1 41.1L50.2 24.4" stroke="#8a5218"/><path d="M23.4 41.0L21.7 13.9" stroke="#d2a04a"/><path d="M84.9 62.4L87.2 48.9" stroke="#6e3f14"/><path d="M60.9 74.3L61.4 58.3" stroke="#b87a2c"/><path d="M31.9 77.8L32.6 63.9" stroke="#6e3f14"/><path d="M76.7 32.7L77.8 9.0" stroke="#d2a04a"/><path d="M116.4 76.8L119.5 63.5" stroke="#d2a04a"/><path d="M37.4 30.5L33.7 16.7" stroke="#e0b868"/><path d="M41.4 58.4L39.1 47.0" stroke="#b87a2c"/><path d="M106.6 20.0L104.8 1.9" stroke="#e0b868"/><path d="M102.2 60.0L106.0 39.0" stroke="#6e3f14"/><path d="M72.4 25.5L71.1 4.6" stroke="#6e3f14"/><path d="M34.6 40.4L33.9 27.8" stroke="#6e3f14"/><path d="M75.8 41.4L76.6 28.6" stroke="#6e3f14"/><path d="M56.3 31.6L53.0 18.9" stroke="#b87a2c"/><path d="M0.1 26.3L1.0 4.9" stroke="#8a5218"/><path d="M38.4 70.8L37.8 49.6" stroke="#8a5218"/><path d="M58.2 47.8L57.3 23.6" stroke="#8a5218"/><path d="M70.3 35.1L70.3 5.5" stroke="#e0b868"/><path d="M2.3 74.8L5.8 58.7" stroke="#8a5218"/><path d="M56.3 27.1L55.8 4.6" stroke="#c08430"/><path d="M4.7 27.9L4.6 10.1" stroke="#6e3f14"/><path d="M32.3 74.2L30.3 48.6" stroke="#c08430"/><path d="M99.6 61.8L99.5 46.1" stroke="#e0b868"/><path d="M61.1 70.1L64.3 42.5" stroke="#d2a04a"/><path d="M89.7 37.4L88.4 16.8" stroke="#c08430"/><path d="M86.3 21.5L87.7 4.5" stroke="#6e3f14"/><path d="M15.6 20.2L17.1 -0.9" stroke="#d2a04a"/><path d="M104.8 51.6L107.0 41.4" stroke="#e0b868"/><path d="M70.2 60.0L71.4 30.9" stroke="#e0b868"/><path d="M56.1 59.6L59.3 35.2" stroke="#e0b868"/><path d="M97.9 23.8L99.5 -2.9" stroke="#e0b868"/></g><g filter="url(#fxb1)"><path d="M55 26L60 16" stroke="#8a3a3a" stroke-width="1.300"/><path d="M82 40L88 24" stroke="#a87088" stroke-width="1.500"/><path d="M86 62L84 50" stroke="#a05068" stroke-width="2"/><path d="M78 12V22" stroke="#e8e0d8" stroke-width="1.400"/><ellipse cx="88" cy="24" rx="3" ry="1.300" fill="#e0d0d0"/></g><g filter="url(#fxr)"><path d="M44 30C56 32 62 44 68 58 72 66 76 72 79 79H46Z" fill="#e48a26"/><path d="M54 42C60 50 66 62 72 79H62C62 64 58 52 54 42Z" fill="#f2a444"/><path d="M16.500 46C24 44 36 44 48 38 55 44 55 56 51 66 51 72 52 76 52 79H21C24 70 19 62 16.500 56Z" fill="#dcd4c4"/><path d="M24 54C30 50 40 52 47 58 47 66 45 74 47 79H28C30 70 25 62 24 54Z" fill="#a79b89" filter="url(#fxb2)"/><path d="M30 62C34 60 40 62 42 66 42 70 41 75 42 79H33C34 72 31 66 30 62Z" fill="#8e8474" filter="url(#fxb2)"/><path d="M17 14C21 11.500 26 10.500 30 11.500 36 11 44 14 50 20 54.500 26 55.500 33 52 39 46 44 38 45 32 48 27 50 22 49 19.500 47.500 17.500 44 18 38 19 32 18.500 24 17 18 17 14Z" fill="#e68c2a"/><path d="M24 14C30 13 38 16 42 22 40 28 34 30 28 28 24 24 23 18 24 14Z" fill="#f0a03c"/><path d="M19 40C22 36.500 30 36 37 38 42 39 45 41 46 43 40 46 34 47.500 30 49 26 50 22 49.500 19.500 47.500 18.500 45 18.500 42 19 40Z" fill="#f2eadc"/><path d="M16.500 15C16 9.500 16.300 4 17 0.600 21.500 3 26.500 8 29 11.800 25 11.500 20 12.800 16.500 15Z" fill="#4a3b28"/><path d="M18.300 13.500C17.800 9.500 18.200 6.500 18.800 4.200 21.500 6 24.500 9 26.200 11.300Z" fill="#a89a80"/><path d="M19.500 12.500C19.500 10 20 8 20.500 7 22 8.500 23.500 10 24.500 11.500Z" fill="#5a4a34"/><path d="M37 14C38 9 41 4 45 1.800 49.500 6 52.500 14 52 22.500 47.500 19 42 15.500 37 14Z" fill="#3a2c1a"/><path d="M39 13.300C40 9.500 42.500 6 44.500 4.500 44.500 8 44 12 44 15.500Z" fill="#c8b48a"/><ellipse cx="21.300" cy="44.800" rx="2.500" ry="2.300" fill="#0c0a08"/><path d="M30.500 31.200C32 30 34.500 30 36.500 31" stroke="#24160a" stroke-width="1.300" fill="none"/><path d="M19.800 29.800L22.500 31.200" stroke="#24160a" stroke-width="1.400"/><path d="M22 46.500C25 47.500 28 47 30 46" stroke="#5a4030" stroke-width="0.600" fill="none"/></g><rect width="118" height="78" filter="url(#fxn)" opacity="0.16"/></svg>
<svg class="a" style="left:661.4px;top:199.2px;overflow:hidden" width="73.3" height="109.4" viewBox="0 0 73.3 109.4" preserveAspectRatio="none"><defs><filter id="gib1" x="-20%" y="-20%" width="140%" height="140%"><feGaussianBlur stdDeviation="0.6"/></filter><filter id="gib2" x="-20%" y="-20%" width="140%" height="140%"><feGaussianBlur stdDeviation="1.6"/></filter><filter id="gib3" x="-30%" y="-30%" width="160%" height="160%"><feGaussianBlur stdDeviation="4"/></filter><filter id="gir" x="-10%" y="-10%" width="120%" height="120%"><feTurbulence type="fractalNoise" baseFrequency="0.35" numOctaves="2" seed="7" result="t"/><feDisplacementMap in="SourceGraphic" in2="t" scale="3.2" xChannelSelector="R" yChannelSelector="G"/><feGaussianBlur stdDeviation="0.45"/></filter><filter id="gin" x="0" y="0" width="100%" height="100%"><feTurbulence type="fractalNoise" baseFrequency="0.9" numOctaves="2" seed="3"/><feColorMatrix type="matrix" values="0 0 0 0 0  0 0 0 0 0  0 0 0 0 0  0.9 0.9 0.9 0 -0.95"/></filter></defs><defs><linearGradient id="gisky" x1="0" y1="0" x2="0" y2="1"><stop offset="0" stop-color="#a6a6ae"/><stop offset="0.12" stop-color="#adadb4"/><stop offset="0.3" stop-color="#bebec2"/><stop offset="1" stop-color="#c3c3c6"/></linearGradient><linearGradient id="gigr" x1="0" y1="0" x2="0" y2="1"><stop offset="0" stop-color="#dcc592"/><stop offset="0.35" stop-color="#c9ae74"/><stop offset="0.7" stop-color="#a58c52"/><stop offset="1" stop-color="#988048"/></linearGradient></defs><rect width="73.3" height="73" fill="url(#gisky)"/><g filter="url(#gib2)"><ellipse cx="20" cy="8" rx="22" ry="3.500" fill="#9d9da6"/><ellipse cx="60" cy="3" rx="16" ry="3" fill="#a0a0a8"/><ellipse cx="62" cy="14" rx="12" ry="2.500" fill="#cfcfd2"/></g><path d="M0 74C10 72.500 25 73.500 40 73 55 72.500 65 72 73.300 73V81H0Z" fill="#a29fa9"/><rect y="80.500" width="73.300" height="29" fill="url(#gigr)"/><g filter="url(#gib1)"><ellipse cx="40" cy="88" rx="3" ry="0.800" fill="#7c8058"/><ellipse cx="48" cy="91" rx="4.500" ry="1.300" fill="#6f7a50"/><ellipse cx="20" cy="100" rx="18" ry="2.500" fill="#8a7a48"/><ellipse cx="50" cy="104" rx="20" ry="3" fill="#b09858"/></g><defs><pattern id="gisp" width="3.200" height="3" patternUnits="userSpaceOnUse" patternTransform="rotate(-30)"><rect width="3.200" height="3" fill="#b08040"/><ellipse cx="1" cy="0.900" rx="0.850" ry="0.750" fill="#4e3218"/><ellipse cx="2.500" cy="2.300" rx="0.800" ry="0.700" fill="#553a1c"/></pattern></defs><g filter="url(#gib1)"><path d="M11 72L7.500 86 5.500 97" fill="none" stroke="#c9a878" stroke-width="2.200"/><path d="M14.500 74L16.500 86 19.500 96" fill="none" stroke="#e2cda8" stroke-width="2.200"/><path d="M27 74L27 88 26.500 97" fill="none" stroke="#c9a070" stroke-width="2.200"/><path d="M30.500 73L36.500 86 32.500 98" fill="none" stroke="#e0c8a0" stroke-width="2.200"/><path d="M7.500 66C9 61 16 59 22 58 26 54 28 52 31 50L46 35 49.500 37 36 60C36 68 34 74 30 76 24 78 16 77 11 76 8 74 7 70 7.500 66Z" fill="url(#gisp)"/><path d="M16 75C20 77 26 77 30 75 28 72 20 72 16 75Z" fill="#e8dcc4"/><path d="M45.500 36C46 33 48 31 51 30.500 53.500 31 55.500 34 58.300 38.300 57.500 39.500 56 39.500 54 37.500 52 37 50 37.500 48.500 38.500Z" fill="#b8925a"/><path d="M50.200 31V28.500M52.200 31V28.500" stroke="#2a1a10" stroke-width="0.900"/><path d="M46.500 32.500L44.500 31.500" stroke="#e0d0b0" stroke-width="1.300"/><path d="M8 65C5 68 3 72 0 75" fill="none" stroke="#b08850" stroke-width="0.900"/></g></svg>
<svg class="a" style="left:759px;top:215px;overflow:hidden" width="118" height="78" viewBox="0 0 118 78" preserveAspectRatio="none"><defs><filter id="tgb1" x="-20%" y="-20%" width="140%" height="140%"><feGaussianBlur stdDeviation="0.6"/></filter><filter id="tgb2" x="-20%" y="-20%" width="140%" height="140%"><feGaussianBlur stdDeviation="1.6"/></filter><filter id="tgb3" x="-30%" y="-30%" width="160%" height="160%"><feGaussianBlur stdDeviation="4"/></filter><filter id="tgr" x="-10%" y="-10%" width="120%" height="120%"><feTurbulence type="fractalNoise" baseFrequency="0.35" numOctaves="2" seed="7" result="t"/><feDisplacementMap in="SourceGraphic" in2="t" scale="3.2" xChannelSelector="R" yChannelSelector="G"/><feGaussianBlur stdDeviation="0.45"/></filter><filter id="tgn" x="0" y="0" width="100%" height="100%"><feTurbulence type="fractalNoise" baseFrequency="0.9" numOctaves="2" seed="3"/><feColorMatrix type="matrix" values="0 0 0 0 0  0 0 0 0 0  0 0 0 0 0  0.9 0.9 0.9 0 -0.95"/></filter></defs><rect width="118" height="78" fill="#6aa534"/><defs><linearGradient id="tggr" x1="0" y1="0" x2="0" y2="1"><stop offset="0" stop-color="#5e9a2e"/><stop offset="0.5" stop-color="#74b03a"/><stop offset="1" stop-color="#6a9a38"/></linearGradient></defs><rect y="18" width="118" height="40" fill="url(#tggr)"/><g filter="url(#tgb2)"><rect x="-4" y="-4" width="126" height="24" fill="#a08a58"/><ellipse cx="40" cy="16" rx="12" ry="6" fill="#3e2e1a"/><ellipse cx="18" cy="6" rx="16" ry="7" fill="#b39c68"/><ellipse cx="48" cy="6" rx="9" ry="7" fill="#b8a070"/><ellipse cx="75" cy="10" rx="14" ry="12" fill="#5e8a3a"/><ellipse cx="62" cy="18" rx="7" ry="4" fill="#3a3018"/><ellipse cx="105" cy="8" rx="14" ry="8" fill="#9a8458"/><ellipse cx="104" cy="20" rx="14" ry="4" fill="#8a7a48"/><ellipse cx="8" cy="20" rx="10" ry="3" fill="#5a4a28"/><ellipse cx="62" cy="24" rx="6" ry="3" fill="#9a8040"/></g><path d="M0 55C20 53.500 30 55 45 56H118V78H0Z" fill="#a8957c" filter="url(#tgb1)"/><g filter="url(#tgb2)"><ellipse cx="60" cy="74" rx="50" ry="5" fill="#b5a48c"/><ellipse cx="20" cy="62" rx="14" ry="3" fill="#9a8a74"/></g><rect width="118" height="78" filter="url(#tgn)" opacity="0.25"/><g filter="url(#tgr)"><path d="M72 64C84 66.500 100 66 111 62" fill="none" stroke="#e8e0d0" stroke-width="3"/><path d="M72 64C84 66.500 100 66 111 62" fill="none" stroke="#1a1410" stroke-width="3" stroke-dasharray="1.500 2"/><path d="M27 48C30 40 40 36 54 36 66 34 80 34 92 38 104 42 112 50 114 58 114 62 110 64 104 64 96 66 84 62 74 62 66 62 56 64 48 62 40 66 30 66 22 68 16 70 12 70 10 68 10 66 14 63 20 60 22 56 24 52 27 48Z" fill="#d98a34"/><path d="M30 44C34 40 44 40 48 44 46 50 40 54 34 58 30 54 29 48 30 44Z" fill="#efe6d8"/><ellipse cx="98" cy="52" rx="12" ry="10" fill="#e09a44"/><path d="M70 60C78 57 90 58 98 62 90 65 78 64 70 62Z" fill="#e8a050"/><g stroke="#17110c" fill="none" stroke-width="1.300"><path d="M52 36.5C54 44 54.5 52 53 61"/><path d="M56 36.5C58 44 58.5 52 57 61"/><path d="M60 36.5C62 44 62.5 52 61 61"/><path d="M64 35.5C66 44 66.5 52 65 61"/><path d="M68 35.5C70 44 70.5 52 69 61"/><path d="M72 35.5C74 44 74.5 52 73 61"/><path d="M76 35.5C78 44 78.5 52 77 61"/><path d="M80 35.5C82 44 82.5 52 81 61"/><path d="M84 36.5C86 44 86.5 52 85 61"/><path d="M88 40C94 46 98 52 96 60"/><path d="M91.6 42C96.4 47.2 99.2 52.8 98 60"/><path d="M95.2 44C98.8 48.4 100.4 53.6 100 60"/><path d="M98.8 46C101.2 49.6 101.6 54.4 102 60"/><path d="M102.4 48C103.6 50.8 102.8 55.2 104 60"/><path d="M106 50C106 52 104 56 106 60"/><path d="M33 48L37 56M36 46L41 52M26 56L32 60M40 56L48 50M42 60L52 52"/></g><ellipse cx="16" cy="65" rx="6" ry="3" fill="#e8dcc8"/><ellipse cx="21" cy="62" rx="5" ry="2.500" fill="#dcd0bc"/><ellipse cx="40.500" cy="31" rx="13" ry="9" fill="#e6e0d6"/><ellipse cx="40.500" cy="28" rx="9.500" ry="10.500" fill="#d98c3c"/><ellipse cx="31.500" cy="18" rx="2.600" ry="2.400" fill="#1a1410"/><ellipse cx="49.500" cy="18" rx="2.600" ry="2.400" fill="#1a1410"/><ellipse cx="32" cy="17.500" rx="1.200" ry="1" fill="#f0ece4"/><ellipse cx="49.500" cy="17.500" rx="1.200" ry="1" fill="#f0ece4"/><ellipse cx="40.500" cy="38" rx="5" ry="3.500" fill="#efe9e0"/><path d="M39 35.500H42L40.500 37.500Z" fill="#c8503a"/><g stroke="#17110c" stroke-width="0.900" fill="none"><path d="M37 20L38 24M40.500 19V23.500M44 20L43 24M32 24L35 26M49 24L46 26M30 29L34 30M51 29L47 30M30 33L33.500 33M51 33L47.500 33M36 27.500L38 28.500M45 27.500L43 28.500"/></g></g></svg>
<svg class="a" style="left:879px;top:220.7px;overflow:hidden" width="118" height="66" viewBox="0 0 118 66" preserveAspectRatio="none"><defs><filter id="tub1" x="-20%" y="-20%" width="140%" height="140%"><feGaussianBlur stdDeviation="0.6"/></filter><filter id="tub2" x="-20%" y="-20%" width="140%" height="140%"><feGaussianBlur stdDeviation="1.6"/></filter><filter id="tub3" x="-30%" y="-30%" width="160%" height="160%"><feGaussianBlur stdDeviation="4"/></filter><filter id="tur" x="-10%" y="-10%" width="120%" height="120%"><feTurbulence type="fractalNoise" baseFrequency="0.35" numOctaves="2" seed="7" result="t"/><feDisplacementMap in="SourceGraphic" in2="t" scale="3.2" xChannelSelector="R" yChannelSelector="G"/><feGaussianBlur stdDeviation="0.45"/></filter><filter id="tun" x="0" y="0" width="100%" height="100%"><feTurbulence type="fractalNoise" baseFrequency="0.9" numOctaves="2" seed="3"/><feColorMatrix type="matrix" values="0 0 0 0 0  0 0 0 0 0  0 0 0 0 0  0.9 0.9 0.9 0 -0.95"/></filter></defs><defs><linearGradient id="tuw" x1="0" y1="0" x2="0" y2="1"><stop offset="0" stop-color="#0c55b5"/><stop offset="0.2" stop-color="#0f6cbf"/><stop offset="0.36" stop-color="#2aa2c6"/><stop offset="0.5" stop-color="#8cc4bc"/><stop offset="0.7" stop-color="#a9c4ae"/><stop offset="0.85" stop-color="#8eaa66"/><stop offset="1" stop-color="#7f9c4c"/></linearGradient></defs><rect width="118" height="66" fill="url(#tuw)"/><rect width="118" height="66" filter="url(#tun)" opacity="0.18"/><g filter="url(#tur)"><ellipse cx="45" cy="52" rx="28" ry="5" fill="#5e7a5a" opacity="0.7"/><path d="M88 44C98 42 110 42 117 43 112 47 104 50 96 50Z" fill="#a9b4a0"/><path d="M22 28C14 30 9 36 10 42 12 48 22 53 34 54 39 52 38 48 32 44 28 40 26 34 26 30Z" fill="#66707e"/><path d="M26 20C30 26 28 34 30 42 36 46 46 48 56 46 62 40 62 32 56 26 46 22 36 18 26 20Z" fill="#c9d2c2"/><path d="M36 30C44 30 52 34 56 40 50 44 42 44 34 42Z" fill="#e4e8da"/><path d="M34 10C44 5 62 5 76 12 90 20 100 34 103 42 96 44 84 42 74 40 62 38 50 32 42 26 36 20 33 14 34 10Z" fill="#566684"/><path d="M42 12C52 9 64 10 74 16 66 20 54 20 46 18Z" fill="#8a8e9a"/><path d="M58 24C68 22 80 26 90 36 80 36 66 32 58 28Z" fill="#44557a"/><path d="M44 26C56 34 72 40 90 42 96 44 100 43 103 42" fill="none" stroke="#b8bca8" stroke-width="1.300"/><path d="M52 36C60 34 68 38 76 44 90 52 104 58 113 62 108 66 96 66 86 62 74 58 62 52 56 46 52 42 51 38 52 36Z" fill="#4a5a7c"/><path d="M56 40C68 46 86 56 106 62" fill="none" stroke="#8894aa" stroke-width="0.800" stroke-dasharray="1.500 1.500"/><path d="M60 38C72 42 90 54 110 61" fill="none" stroke="#2e3a58" stroke-width="1" stroke-dasharray="2 1.500"/><circle cx="65.2" cy="25.0" r="0.93" fill="#b8b8b0" opacity="0.55"/><circle cx="50.2" cy="15.1" r="1.16" fill="#9aa2b0" opacity="0.55"/><circle cx="62.4" cy="21.0" r="1.22" fill="#9aa2b0" opacity="0.55"/><circle cx="72.1" cy="24.0" r="1.12" fill="#b8b8b0" opacity="0.55"/><circle cx="76.3" cy="20.8" r="0.62" fill="#b8b8b0" opacity="0.55"/><circle cx="74.6" cy="22.9" r="1.01" fill="#b8b8b0" opacity="0.55"/><circle cx="69.4" cy="22.5" r="1.06" fill="#7c86a0" opacity="0.55"/><circle cx="75.5" cy="26.5" r="1.25" fill="#9aa2b0" opacity="0.55"/><circle cx="77.8" cy="24.7" r="0.80" fill="#9aa2b0" opacity="0.55"/><circle cx="68.6" cy="19.7" r="0.80" fill="#9aa2b0" opacity="0.55"/><circle cx="94.8" cy="28.9" r="0.75" fill="#9aa2b0" opacity="0.55"/><circle cx="68.7" cy="20.2" r="0.65" fill="#b8b8b0" opacity="0.55"/><circle cx="81.4" cy="25.1" r="0.83" fill="#7c86a0" opacity="0.55"/><circle cx="79.4" cy="26.2" r="0.67" fill="#9aa2b0" opacity="0.55"/><circle cx="65.5" cy="22.9" r="0.73" fill="#b8b8b0" opacity="0.55"/><circle cx="95.8" cy="33.8" r="0.87" fill="#7c86a0" opacity="0.55"/><circle cx="61.4" cy="17.6" r="1.28" fill="#3a4664" opacity="0.55"/><circle cx="92.0" cy="31.8" r="1.30" fill="#9aa2b0" opacity="0.55"/><circle cx="40.2" cy="9.5" r="0.61" fill="#3a4664" opacity="0.55"/><circle cx="85.0" cy="26.3" r="0.75" fill="#b8b8b0" opacity="0.55"/><circle cx="40.1" cy="10.6" r="0.69" fill="#7c86a0" opacity="0.55"/><circle cx="83.6" cy="29.5" r="1.04" fill="#3a4664" opacity="0.55"/><circle cx="91.9" cy="30.1" r="0.73" fill="#b8b8b0" opacity="0.55"/><circle cx="77.1" cy="26.7" r="0.65" fill="#9aa2b0" opacity="0.55"/><circle cx="42.9" cy="16.3" r="0.77" fill="#7c86a0" opacity="0.55"/><circle cx="56.1" cy="16.6" r="0.81" fill="#b8b8b0" opacity="0.55"/><circle cx="94.0" cy="29.4" r="0.94" fill="#9aa2b0" opacity="0.55"/><circle cx="57.9" cy="13.3" r="0.61" fill="#3a4664" opacity="0.55"/><circle cx="61.1" cy="15.2" r="0.80" fill="#b8b8b0" opacity="0.55"/><circle cx="42.9" cy="10.9" r="0.83" fill="#b8b8b0" opacity="0.55"/><circle cx="75.0" cy="24.1" r="0.85" fill="#3a4664" opacity="0.55"/><circle cx="90.1" cy="35.4" r="0.94" fill="#3a4664" opacity="0.55"/><circle cx="60.5" cy="13.0" r="0.98" fill="#9aa2b0" opacity="0.55"/><circle cx="90.9" cy="34.4" r="1.16" fill="#3a4664" opacity="0.55"/><circle cx="60.5" cy="22.2" r="1.21" fill="#7c86a0" opacity="0.55"/><circle cx="89.1" cy="33.5" r="0.61" fill="#7c86a0" opacity="0.55"/><circle cx="57.9" cy="14.6" r="0.66" fill="#9aa2b0" opacity="0.55"/><circle cx="96.9" cy="37.1" r="0.87" fill="#7c86a0" opacity="0.55"/><circle cx="66.3" cy="16.3" r="1.13" fill="#9aa2b0" opacity="0.55"/><circle cx="54.6" cy="12.3" r="1.27" fill="#9aa2b0" opacity="0.55"/><circle cx="82.3" cy="52.0" r="0.65" fill="#8894aa" opacity="0.6"/><circle cx="73.7" cy="47.4" r="0.81" fill="#2e3a58" opacity="0.6"/><circle cx="90.1" cy="55.8" r="0.70" fill="#6a78a0" opacity="0.6"/><circle cx="69.6" cy="45.5" r="0.95" fill="#8894aa" opacity="0.6"/><circle cx="101.3" cy="59.5" r="0.69" fill="#8894aa" opacity="0.6"/><circle cx="62.4" cy="43.2" r="0.52" fill="#8894aa" opacity="0.6"/><circle cx="104.5" cy="59.1" r="0.77" fill="#2e3a58" opacity="0.6"/><circle cx="105.5" cy="59.6" r="0.81" fill="#6a78a0" opacity="0.6"/><circle cx="73.8" cy="48.0" r="0.77" fill="#8894aa" opacity="0.6"/><circle cx="98.2" cy="58.4" r="0.91" fill="#2e3a58" opacity="0.6"/><circle cx="84.9" cy="53.2" r="0.51" fill="#8894aa" opacity="0.6"/><circle cx="75.8" cy="49.1" r="0.66" fill="#8894aa" opacity="0.6"/><circle cx="99.4" cy="55.2" r="0.57" fill="#6a78a0" opacity="0.6"/><circle cx="91.3" cy="56.0" r="0.91" fill="#8894aa" opacity="0.6"/><circle cx="97.9" cy="58.8" r="0.95" fill="#6a78a0" opacity="0.6"/><circle cx="91.9" cy="54.0" r="0.71" fill="#6a78a0" opacity="0.6"/><circle cx="105.2" cy="63.2" r="0.60" fill="#6a78a0" opacity="0.6"/><circle cx="101.5" cy="61.9" r="0.93" fill="#8894aa" opacity="0.6"/><circle cx="78.2" cy="50.7" r="0.50" fill="#6a78a0" opacity="0.6"/><circle cx="87.1" cy="53.1" r="1.07" fill="#2e3a58" opacity="0.6"/><circle cx="74.9" cy="43.8" r="1.02" fill="#6a78a0" opacity="0.6"/><circle cx="102.6" cy="58.9" r="0.73" fill="#8894aa" opacity="0.6"/><circle cx="107.0" cy="62.9" r="0.69" fill="#6a78a0" opacity="0.6"/><circle cx="99.9" cy="56.5" r="0.76" fill="#6a78a0" opacity="0.6"/><circle cx="77.0" cy="50.2" r="0.63" fill="#8894aa" opacity="0.6"/><circle cx="76.4" cy="48.5" r="0.91" fill="#8894aa" opacity="0.6"/><circle cx="82.5" cy="51.3" r="0.81" fill="#6a78a0" opacity="0.6"/><circle cx="93.6" cy="54.5" r="1.07" fill="#8894aa" opacity="0.6"/><circle cx="95.2" cy="56.5" r="1.00" fill="#6a78a0" opacity="0.6"/><circle cx="89.3" cy="55.1" r="0.84" fill="#2e3a58" opacity="0.6"/><path d="M10 8C14 4 24 4 30 8 34 12 32 18 26 20 20 20 14 18 11 14 9 12 9 10 10 8Z" fill="#3c4864"/><path d="M10 12C14 16 22 18 30 16 30 20 28 24 26 26 20 24 14 20 10 16Z" fill="#c0c8b8"/><ellipse cx="17" cy="8" rx="2" ry="1.500" fill="#1a2030"/></g></svg>
<svg class="a" style="left:999px;top:210.2px;overflow:hidden" width="118" height="86.8" viewBox="0 0 118 87" preserveAspectRatio="none"><defs><filter id="zbb1" x="-20%" y="-20%" width="140%" height="140%"><feGaussianBlur stdDeviation="0.6"/></filter><filter id="zbb2" x="-20%" y="-20%" width="140%" height="140%"><feGaussianBlur stdDeviation="1.6"/></filter><filter id="zbb3" x="-30%" y="-30%" width="160%" height="160%"><feGaussianBlur stdDeviation="4"/></filter><filter id="zbr" x="-10%" y="-10%" width="120%" height="120%"><feTurbulence type="fractalNoise" baseFrequency="0.35" numOctaves="2" seed="7" result="t"/><feDisplacementMap in="SourceGraphic" in2="t" scale="3.2" xChannelSelector="R" yChannelSelector="G"/><feGaussianBlur stdDeviation="0.45"/></filter><filter id="zbn" x="0" y="0" width="100%" height="100%"><feTurbulence type="fractalNoise" baseFrequency="0.9" numOctaves="2" seed="3"/><feColorMatrix type="matrix" values="0 0 0 0 0  0 0 0 0 0  0 0 0 0 0  0.9 0.9 0.9 0 -0.95"/></filter></defs><defs><linearGradient id="zbg" x1="0" y1="0" x2="0" y2="1"><stop offset="0" stop-color="#64982e"/><stop offset="0.5" stop-color="#72a636"/><stop offset="1" stop-color="#6a9c32"/></linearGradient><pattern id="zst" width="2.600" height="10" patternUnits="userSpaceOnUse" patternTransform="rotate(8)"><rect width="2.600" height="10" fill="#d8d8d8"/><rect width="1.300" height="10" fill="#1c1c1c"/></pattern><pattern id="zst2" width="10" height="2.400" patternUnits="userSpaceOnUse" patternTransform="rotate(-35)"><rect width="10" height="2.400" fill="#dcdcdc"/><rect width="10" height="1.200" fill="#1c1c1c"/></pattern><pattern id="zst3" width="10" height="2" patternUnits="userSpaceOnUse"><rect width="10" height="2" fill="#c8c8c8"/><rect width="10" height="1" fill="#2a2a2a"/></pattern></defs><rect width="118" height="87" fill="url(#zbg)"/><rect width="118" height="87" filter="url(#zbn)" opacity="0.18"/><rect width="118" height="3.400" fill="#24241c"/><g filter="url(#zbb1)"><rect x="34" y="0.500" width="4" height="2.500" fill="#8a8470"/><rect x="46" y="0.500" width="6" height="2.500" fill="#a8a8a0"/><rect x="60" y="0.800" width="5" height="2.500" fill="#9a988a"/><rect x="86" y="0.500" width="4" height="2.500" fill="#aaa898"/><rect x="104" y="0.500" width="6" height="2.500" fill="#8a8a78"/></g><g filter="url(#zbb1)"><path d="M62 52L60.5 79" stroke="url(#zst3)" stroke-width="3.200" fill="none"/><ellipse cx="60" cy="79.5" rx="2.200" ry="1.300" fill="#1c1c1c"/><path d="M68 54L66.5 81" stroke="url(#zst3)" stroke-width="3.200" fill="none"/><ellipse cx="66" cy="81.5" rx="2.200" ry="1.300" fill="#1c1c1c"/><path d="M97.5 52L95 76" stroke="url(#zst3)" stroke-width="3.200" fill="none"/><ellipse cx="94.5" cy="76.5" rx="2.200" ry="1.300" fill="#1c1c1c"/><path d="M103 50L101.5 77" stroke="url(#zst3)" stroke-width="3.200" fill="none"/><ellipse cx="101" cy="77.5" rx="2.200" ry="1.300" fill="#1c1c1c"/><path d="M108.500 42C109.500 48 109 54 107.500 60" stroke="#e8e4d8" stroke-width="1.600" fill="none"/><path d="M108 52L107 61" stroke="#6a3a1a" stroke-width="1.800"/><path d="M58 30C64 30 70 30 76 30 84 26 96 25 104 28 110 32 111 42 109 50 104 54 98 56 92 56 84 58 74 58 68 56 62 54 58 48 56 42 55 36 56 32 58 30Z" fill="url(#zst)"/><path d="M94 28C102 27 110 32 110 42 109 48 106 52 100 54 98 46 96 36 94 28Z" fill="url(#zst3)"/><path d="M70 53C78 55 88 55 96 51 92 57 80 59 72 57Z" fill="#eeeeea"/><path d="M52 17C56 16 60 18 64 22 70 26 76 29 78 32 74 40 68 46 60 48 56 44 54 38 53 32 52 26 51 20 52 17Z" fill="url(#zst2)"/><path d="M53 14C58 16 66 22 74 29" stroke="#2a2018" stroke-width="2.400" fill="none"/><path d="M46.500 20C49 18 53 18 55 20 56 26 55 32 53 37 52 41 50 44 47 44 44.500 43 44 40 45 36 46 30 46 24 46.500 20Z" fill="#9a9a9a"/><path d="M47 22C49 21 52 21 54 22 54 28 53 32 51 36H47.500C48 30 47 26 47 22Z" fill="url(#zst3)"/><ellipse cx="47.300" cy="40.500" rx="2.800" ry="3.200" fill="#2a2624"/><ellipse cx="44.500" cy="16.500" rx="2.800" ry="3.200" fill="#2a2a2a"/><ellipse cx="56" cy="16.800" rx="2.800" ry="3.400" fill="#2a2a2a"/><path d="M49.500 37L48.500 40" stroke="#8a4a30" stroke-width="1"/></g></svg>
<div class="t" style="left:540.48px;top:308.00px;font-size:12.50px;line-height:12.50px;color:#111;letter-spacing:0.000px;">fox-image.jpg</div>
<div class="t" style="left:651.56px;top:308.00px;font-size:12.50px;line-height:12.50px;color:#111;letter-spacing:0.000px;">giraffe-image.jpg</div>
<div class="t" style="left:776.66px;top:308.00px;font-size:12.50px;line-height:12.50px;color:#111;letter-spacing:0.000px;">tiger-image.jpg</div>
<div class="t" style="left:894.92px;top:308.00px;font-size:12.50px;line-height:12.50px;color:#111;letter-spacing:0.000px;">turtle-image.jpg</div>
<div class="t" style="left:1013.18px;top:308.00px;font-size:12.50px;line-height:12.50px;color:#111;letter-spacing:0.000px;">zebra-image.jpg</div>
<svg class="a" style="left:1506.5px;top:147.5px;" width="11" height="6" viewBox="0 0 11 6"><path d="M0.500 5.300L5.200 0.800L9.900 5.300" fill="none" stroke="#9a9a9a" stroke-width="1.200"/></svg>
<svg class="a" style="left:1506.5px;top:964.5px;" width="11" height="6" viewBox="0 0 11 6"><path d="M0.500 0.500L5.200 5L9.900 0.500" fill="none" stroke="#9a9a9a" stroke-width="1.200"/></svg>
<div class="a" style="left:1501px;top:403px;width:18.5px;height:310px;background:#6b6b6b;border-radius:2px;"></div>
<div class="a" style="left:111px;top:983px;width:72px;height:15px;background:#424242;"></div>
<div class="a" style="left:183px;top:983px;width:275.5px;height:15px;background:#535353;"></div>
<div class="t" style="left:128.50px;top:986.00px;font-size:17.30px;line-height:17.30px;color:#f0f0f0;letter-spacing:-0.042px;">25%</div>
<div class="t" style="left:208.50px;top:986.00px;font-size:17.30px;line-height:17.30px;color:#d6d6d6;letter-spacing:-0.351px;">2400 px x 3000 px (300 ppi)</div>
<svg class="a" style="left:444.5px;top:988.5px;" width="6" height="12" viewBox="0 0 6 12"><path d="M0.700 0.500L4.800 6.500L0.700 12.500" fill="none" stroke="#bdbdbd" stroke-width="1.200"/></svg>
<svg class="a" style="left:471.5px;top:991.3px;" width="6" height="12" viewBox="0 0 6 12"><path d="M5.200 0.500L0.800 5.500L5.200 10.500" fill="none" stroke="#8a8a8a" stroke-width="1.200"/></svg>
<svg class="a" style="left:1479px;top:991.3px;" width="6" height="12" viewBox="0 0 6 12"><path d="M0.800 0.500L5.200 5.500L0.800 10.500" fill="none" stroke="#8a8a8a" stroke-width="1.200"/></svg>
<div class="a" style="left:755.5px;top:985.5px;width:444.5px;height:13px;background:#6b6b6b;border-radius:2px 2px 0 0;"></div>
<div class="a" style="left:1498px;top:983px;width:25px;height:15px;background:#535353;"></div>
<!-- p_panel -->
<svg class="a" style="left:1899px;top:96px;" width="12" height="8" viewBox="0 0 12 8"><path d="M1 0.500L4.500 3.500L1 6.500M6.500 0.500L10 3.500L6.500 6.500" fill="none" stroke="#e0e0e0" stroke-width="1.200"/></svg>
<div class="a" style="left:1526px;top:108.5px;width:393px;height:1px;background:#3a3a3a;"></div>
<div class="a" style="left:1526px;top:109.5px;width:76.5px;height:41.5px;background:#535353;"></div>
<div class="a" style="left:1602px;top:109.5px;width:1px;height:41px;background:#383838;"></div>
<div class="a" style="left:1653px;top:109.5px;width:1px;height:41px;background:#383838;"></div>
<div class="a" style="left:1704px;top:109.5px;width:1px;height:41px;background:#383838;"></div>
<div class="a" style="left:1755px;top:109.5px;width:1px;height:41px;background:#383838;"></div>
<div class="a" style="left:1806px;top:109.5px;width:1px;height:41px;background:#383838;"></div>
<div class="a" style="left:1859px;top:109.5px;width:1px;height:41px;background:#383838;"></div>
<div class="a" style="left:1602px;top:150px;width:317px;height:1px;background:#383838;"></div>
<div class="t" style="left:1540.00px;top:120.00px;font-size:17.30px;line-height:17.30px;color:#f2f2f2;letter-spacing:-1.048px;font-weight:bold;">Layers</div>
<div class="a" style="left:1603px;top:110px;width:50px;height:40px;overflow:hidden;"><div class="t" style="left:11.50px;top:10.00px;font-size:17.30px;line-height:17.30px;color:#a3a3a3;letter-spacing:-0.084px;font-weight:bold;">Gradients</div></div>
<div class="a" style="left:1654px;top:110px;width:50px;height:40px;overflow:hidden;"><div class="t" style="left:12.00px;top:10.00px;font-size:17.30px;line-height:17.30px;color:#a3a3a3;letter-spacing:-0.157px;font-weight:bold;">Properties</div></div>
<div class="a" style="left:1705px;top:110px;width:50px;height:40px;overflow:hidden;"><div class="t" style="left:12.00px;top:10.00px;font-size:17.30px;line-height:17.30px;color:#a3a3a3;letter-spacing:-0.343px;font-weight:bold;">Adjustments</div></div>
<div class="a" style="left:1756px;top:110px;width:50px;height:40px;overflow:hidden;"><div class="t" style="left:12.00px;top:10.00px;font-size:17.30px;line-height:17.30px;color:#a3a3a3;letter-spacing:-0.120px;font-weight:bold;">Libraries</div></div>
<div class="a" style="left:1807px;top:110px;width:52px;height:40px;overflow:hidden;"><div class="t" style="left:11.50px;top:10.00px;font-size:17.30px;line-height:17.30px;color:#a3a3a3;letter-spacing:-0.134px;font-weight:bold;">Color</div></div>
<svg class="a" style="left:1895px;top:125px;" width="16" height="12" viewBox="0 0 16 12"><rect x="0" y="0" width="15.500" height="1.600" fill="#d6d6d6"/><rect x="0" y="3.1" width="15.500" height="1.600" fill="#d6d6d6"/><rect x="0" y="6.2" width="15.500" height="1.600" fill="#d6d6d6"/><rect x="0" y="9.3" width="15.500" height="1.600" fill="#d6d6d6"/></svg>
<div class="a" style="left:1531px;top:164.5px;width:139.5px;height:30.8px;background:#454545;border:1px solid #606060;border-radius:4px;"></div>
<svg class="a" style="left:1544px;top:174px;" width="17" height="15" viewBox="0 0 17 15"><circle cx="6" cy="6" r="4.900" fill="none" stroke="#dcdcdc" stroke-width="1.900"/><path d="M9.800 9.500L15 14" stroke="#dcdcdc" stroke-width="2.600" fill="none"/></svg>
<div class="t" style="left:1564.70px;top:173.00px;font-size:17.30px;line-height:17.30px;color:#dcdcdc;letter-spacing:-0.781px;">Kind</div>
<svg class="a" style="left:1655.5px;top:179.5px;" width="9" height="5.5" viewBox="0 0 9 5.5"><path d="M0.500 0.500L4.5 4.5L8.5 0.500" fill="none" stroke="#cfcfcf" stroke-width="1.15"/></svg>
<svg class="a" style="left:1688.5px;top:171px;" width="19" height="16" viewBox="0 0 19 16"><rect x="0.900" y="0.900" width="17.200" height="14.200" fill="none" stroke="#dcdcdc" stroke-width="1.800"/><path d="M3 12.500L7 6L9.600 9.600L11.800 6.500L15.800 12.500Z" fill="#dcdcdc"/></svg>
<svg class="a" style="left:1725px;top:170.5px;" width="17" height="17" viewBox="0 0 17 17"><circle cx="8.500" cy="8.500" r="7.500" fill="none" stroke="#dcdcdc" stroke-width="1.700"/><path d="M3.200 13.800A7.500 7.500 0 0 0 13.800 3.200Z" fill="#dcdcdc"/></svg>
<svg class="a" style="left:1761.5px;top:171px;" width="16" height="16" viewBox="0 0 16 16"><path d="M0.600 0.800H15.200V5H13.500V3H9.200V13.600H11.800V15.400H4V13.600H6.600V3H2.300V5H0.600Z" fill="#dcdcdc" stroke="#dcdcdc" stroke-width="0.400" stroke-linejoin="round"/></svg>
<svg class="a" style="left:1797px;top:170px;" width="18" height="18" viewBox="0 0 18 18"><rect x="2.500" y="2.500" width="13" height="13" fill="none" stroke="#dcdcdc" stroke-width="1.700"/><g fill="#535353" stroke="#dcdcdc" stroke-width="1.300"><rect x="0.700" y="0.700" width="3.600" height="3.600"/><rect x="13.700" y="0.700" width="3.600" height="3.600"/><rect x="0.700" y="13.700" width="3.600" height="3.600"/><rect x="13.700" y="13.700" width="3.600" height="3.600"/></g></svg>
<svg class="a" style="left:1834.5px;top:170.5px;" width="17" height="18" viewBox="0 0 17 18"><path d="M5 8V1H11.500L15.500 5V15.500H9.500" fill="none" stroke="#dcdcdc" stroke-width="1.700"/><path d="M11 1V5.500H15.500" fill="none" stroke="#dcdcdc" stroke-width="1.300"/><rect x="0" y="8" width="9.500" height="9.500" fill="#dcdcdc"/></svg>
<div class="a" style="left:1869px;top:166px;width:13.500px;height:26.500px;border-radius:7px;background:#454545;border:1px solid #3e3e3e;"></div>
<div class="a" style="left:1869.500px;top:166px;width:12.500px;height:12.500px;border-radius:7px;background:#e4e4e4;"></div>
<div class="a" style="left:1526px;top:199px;width:393px;height:2px;background:#454545;"></div>
<div class="a" style="left:1531px;top:209px;width:186.5px;height:30px;background:#454545;border:1px solid #606060;border-radius:4px;"></div>
<div class="t" style="left:1544.00px;top:217.00px;font-size:17.30px;line-height:17.30px;color:#dcdcdc;letter-spacing:-0.875px;">Normal</div>
<svg class="a" style="left:1703px;top:223.5px;" width="9" height="5.5" viewBox="0 0 9 5.5"><path d="M0.500 0.500L4.5 4.5L8.5 0.500" fill="none" stroke="#cfcfcf" stroke-width="1.15"/></svg>
<div class="t" style="left:1729.70px;top:214.00px;font-size:17.30px;line-height:17.30px;color:#d2d2d2;letter-spacing:-0.619px;">Opacity:</div>
<div class="a" style="left:1795px;top:209px;width:85.5px;height:26.7px;background:#454545;border:1px solid #606060;border-radius:4px;"></div>
<div class="a" style="left:1858px;top:210.5px;width:1px;height:24.2px;background:#5c5c5c;"></div>
<div class="t" style="left:1803.80px;top:214.00px;font-size:17.30px;line-height:17.30px;color:#dcdcdc;letter-spacing:-0.562px;">100%</div>
<svg class="a" style="left:1865.5px;top:222.5px;" width="9" height="5.5" viewBox="0 0 9 5.5"><path d="M0.500 0.500L4.5 4.5L8.5 0.500" fill="none" stroke="#cfcfcf" stroke-width="1.15"/></svg>
<div class="a" style="left:1526px;top:242px;width:393px;height:2px;background:#454545;"></div>
<div class="t" style="left:1534.50px;top:258.00px;font-size:17.30px;line-height:17.30px;color:#d2d2d2;letter-spacing:-0.770px;">Lock:</div>
<svg class="a" style="left:1589.8px;top:257.6px;" width="17" height="19" viewBox="0 0 17 19"><rect x="0.600" y="0.600" width="15" height="19" fill="#dcdcdc"/><rect x="1.2" y="1.2" width="4.600" height="4.600" fill="#535353"/><rect x="10.4" y="1.2" width="4.600" height="4.600" fill="#535353"/><rect x="5.8" y="5.8" width="4.600" height="4.600" fill="#535353"/><rect x="1.2" y="10.4" width="4.600" height="4.600" fill="#535353"/><rect x="10.4" y="10.4" width="4.600" height="4.600" fill="#535353"/><rect x="5.8" y="15" width="4.600" height="4.600" fill="#535353"/></svg>
<svg class="a" style="left:1623.5px;top:255.5px;" width="19" height="19" viewBox="0 0 19 19"><path d="M18.300 0.300C15 2.500 9.800 8.500 7.500 12.300L11 15C14 11.500 18 5 18.300 0.300Z" fill="#dcdcdc"/><path d="M6.800 13C4 13 2.500 14.800 2.200 16.800 2 18 1.200 18.800 0 19.300 4.300 20 9.300 19 10.200 15.600Z" fill="#dcdcdc"/></svg>
<svg class="a" style="left:1653.5px;top:256px;" width="20" height="20" viewBox="0 0 20 20"><path d="M10 0.300L13.600 4.900H10.700V9.300H15.100V6.400L19.700 10L15.100 13.600V10.700H10.700V15.100H13.600L10 19.700L6.400 15.100H9.300V10.700H4.900V13.600L0.300 10L4.900 6.400V9.300H9.300V4.900H6.400Z" fill="#dcdcdc"/></svg>
<svg class="a" style="left:1685px;top:255px;" width="24" height="18" viewBox="0 0 24 18"><path d="M4.300 4.800H14.500L19.300 9.600V15.200H4.300Z" fill="none" stroke="#dcdcdc" stroke-width="1.600"/><path d="M14.500 4.800V9.600H19.300" fill="none" stroke="#dcdcdc" stroke-width="1.300"/><path d="M1.200 4.800H3M5 1.500V3.300M17.600 1.800H19.200M21.500 4.200V5.800M1.200 15.200H3M20.600 15.200H22.600" stroke="#dcdcdc" stroke-width="1.400" fill="none"/></svg>
<svg class="a" style="left:1722px;top:255.5px;" width="17" height="19" viewBox="0 0 17 19"><path d="M4.100 7.500V5.500A4 4 0 0 1 12.100 5.500V7.500" fill="none" stroke="#dcdcdc" stroke-width="2"/><rect x="0.500" y="6.700" width="15.300" height="12.300" rx="1.300" fill="#dcdcdc"/><circle cx="8.150" cy="12.300" r="1.800" fill="#535353"/></svg>
<div class="t" style="left:1762.30px;top:258.00px;font-size:17.30px;line-height:17.30px;color:#d2d2d2;letter-spacing:-0.481px;">Fill:</div>
<div class="a" style="left:1795px;top:252px;width:85.5px;height:27px;background:#454545;border:1px solid #606060;border-radius:4px;"></div>
<div class="a" style="left:1858px;top:253.5px;width:1px;height:24.5px;background:#5c5c5c;"></div>
<div class="t" style="left:1803.80px;top:257.00px;font-size:17.30px;line-height:17.30px;color:#dcdcdc;letter-spacing:-0.562px;">100%</div>
<svg class="a" style="left:1865.5px;top:265.5px;" width="9" height="5.5" viewBox="0 0 9 5.5"><path d="M0.500 0.500L4.5 4.5L8.5 0.500" fill="none" stroke="#cfcfcf" stroke-width="1.15"/></svg>
<div class="a" style="left:1526px;top:283px;width:393px;height:686px;background:#4d4d4d;"></div>
<div class="a" style="left:1526px;top:283px;width:393px;height:1px;background:#454545;"></div>
<div class="a" style="left:1526px;top:291px;width:44.5px;height:61.5px;background:#535353;"></div>
<div class="a" style="left:1570.5px;top:291px;width:323.5px;height:61.5px;background:#6b6b6b;"></div>
<div class="a" style="left:1526px;top:352px;width:368px;height:1px;background:#454545;"></div>
<div class="a" style="left:1894px;top:284px;width:25px;height:685px;background:#4f4f4f;"></div>
<svg class="a" style="left:1539.5px;top:315.5px;" width="21" height="15" viewBox="0 0 21 15"><path d="M0.500 7.500C4 1.800 8 0.500 10.500 0.500 13 0.500 17 1.800 20.500 7.500 17 13.200 13 14.500 10.500 14.500 8 14.500 4 13.200 0.500 7.500Z" fill="#e6e6e6"/><circle cx="10.500" cy="7.300" r="4.300" fill="#535353"/><circle cx="9.200" cy="6" r="1.400" fill="#e6e6e6"/></svg>
<div class="a" style="left:1577.5px;top:298.5px;width:38.5px;height:47.5px;background:#fff;border:1.5px solid #2c2c2c;"></div>
<svg class="a" style="left:1574px;top:295px;" width="46" height="54" viewBox="0 0 46 54"><path d="M0.700 16V0.700H15M30 0.700H44.300V16M44.300 38V53.300H30M15 53.300H0.700V38" fill="none" stroke="#f0f0f0" stroke-width="1.300"/></svg>
<div class="a" style="left:1579.5px;top:301px;width:6px;height:4.5px;background:#b9782a;"></div>
<div class="a" style="left:1587.7px;top:300px;width:3px;height:6.5px;background:#b3a58e;"></div>
<div class="a" style="left:1592.5px;top:301px;width:6.5px;height:4.5px;background:#a08a3a;"></div>
<div class="a" style="left:1600px;top:301.5px;width:6.5px;height:3.8px;background:#2f86b8;"></div>
<div class="a" style="left:1607.5px;top:300.7px;width:6.5px;height:5px;background:#6c9a33;"></div>
<div class="t" style="left:1629.50px;top:315.00px;font-size:17.30px;line-height:17.30px;color:#e8e8e8;letter-spacing:-0.746px;">Contact Sheet </div>
<div class="t" style="left:1734.50px;top:315.00px;font-size:17.30px;line-height:17.30px;color:#e8e8e8;letter-spacing:0.239px;font-family:'Liberation Serif',serif;">II</div>
<div class="a" style="left:1526px;top:968.5px;width:393px;height:1.5px;background:#3c3c3c;"></div>
<div class="a" style="left:1526px;top:970px;width:393px;height:28px;background:#535353;"></div>
<svg class="a" style="left:1613px;top:982px;" width="22" height="12" viewBox="0 0 22 12"><rect x="1" y="1" width="10.500" height="9.500" rx="4.700" fill="none" stroke="#9a9a9a" stroke-width="1.900"/><rect x="10.500" y="1" width="10.500" height="9.500" rx="4.700" fill="none" stroke="#9a9a9a" stroke-width="1.900"/><rect x="6.500" y="4.700" width="9" height="2.200" fill="#9a9a9a"/></svg>
<div class="t" style="left:1657.00px;top:976.00px;font-size:23.00px;line-height:23.00px;color:#d6d6d6;letter-spacing:0.000px;font-family:'Liberation Serif',serif;font-style:italic;">f</div>
<div class="t" style="left:1663.50px;top:978.00px;font-size:20.00px;line-height:20.00px;color:#d6d6d6;letter-spacing:0.000px;font-style:italic;">x</div>
<svg class="a" style="left:1696px;top:980px;" width="20" height="15" viewBox="0 0 20 15"><rect x="0" y="0" width="19.500" height="15" rx="1" fill="#dcdcdc"/><circle cx="9.700" cy="7.500" r="4.300" fill="#535353"/></svg>
<svg class="a" style="left:1737.5px;top:979.5px;" width="18" height="18" viewBox="0 0 18 18"><circle cx="9" cy="9" r="7.800" fill="none" stroke="#dcdcdc" stroke-width="1.700"/><path d="M3.500 14.500A7.800 7.800 0 0 0 14.500 3.500Z" fill="#dcdcdc"/></svg>
<svg class="a" style="left:1776px;top:980px;" width="21" height="17" viewBox="0 0 21 17"><path d="M0.500 2.500C0.500 1.500 1.200 0.800 2.200 0.800H8L9.500 3H19C20 3 20.500 3.700 20.500 4.500V17H0.500Z" fill="#c8c8c8"/></svg>
<svg class="a" style="left:1818px;top:979.5px;" width="18" height="18" viewBox="0 0 18 18"><rect x="1" y="1" width="16" height="16" fill="none" stroke="#dcdcdc" stroke-width="1.500"/><path d="M9 4.500V13.500M4.500 9H13.500" stroke="#dcdcdc" stroke-width="1.800" fill="none"/></svg>
<svg class="a" style="left:1858px;top:979px;" width="18" height="19" viewBox="0 0 18 19"><path d="M1 4H17M6 3.500V1H12V3.500" fill="none" stroke="#8a8a8a" stroke-width="1.600"/><path d="M3 5.500H15V19H3Z" fill="none" stroke="#8a8a8a" stroke-width="1.600"/><path d="M6.500 7.500V19M9 7.500V19M11.500 7.500V19" stroke="#8a8a8a" stroke-width="1.300" fill="none"/></svg>
<div class="a" style="left:295.195px;top:0px;width:0px;height:0px;background:transparent;"></div>
<div class="a" style="left:1673.36px;top:996.5px;width:6px;height:1.5px;background:#f2f2f2;"></div>
<div class="a" style="left:1754.6px;top:996.5px;width:6px;height:1.5px;background:#f2f2f2;"></div>
<div class="a" style="left:1783.2px;top:994px;width:80px;height:4px;background:#3d4f63;"></div>
<!-- p_annot -->
<div class="a" style="left:369px;top:78px;width:535.3px;height:68px;border:8px solid #e60000;border-radius:4px;"></div>
<div class="a" style="left:496px;top:181px;width:644px;height:164px;border:8px solid #e60000;border-radius:4px;"></div>
<div class="a" style="left:1506px;top:273px;width:405px;height:99px;border:8px solid #e60000;border-radius:4px;"></div>
<svg class="a" style="left:420px;top:130px" width="90" height="70" viewBox="420 130 90 70"><defs><linearGradient id="arg" x1="0" y1="0" x2="1" y2="1"><stop offset="0" stop-color="#f20000"/><stop offset="0.6" stop-color="#ee0000"/><stop offset="0.85" stop-color="#d80000"/><stop offset="1" stop-color="#e60000"/></linearGradient></defs><path d="M434.400 147.700L472.900 165.900L471.100 161.200C470.300 158.600 473.600 156.500 475.800 158.700L476.600 159.800L487.800 182.700L463.600 182C460 181.800 458.600 178.300 460.900 176.400L462 175.800L466.900 175.300Z" fill="url(#arg)"/></svg>
</body></html>
